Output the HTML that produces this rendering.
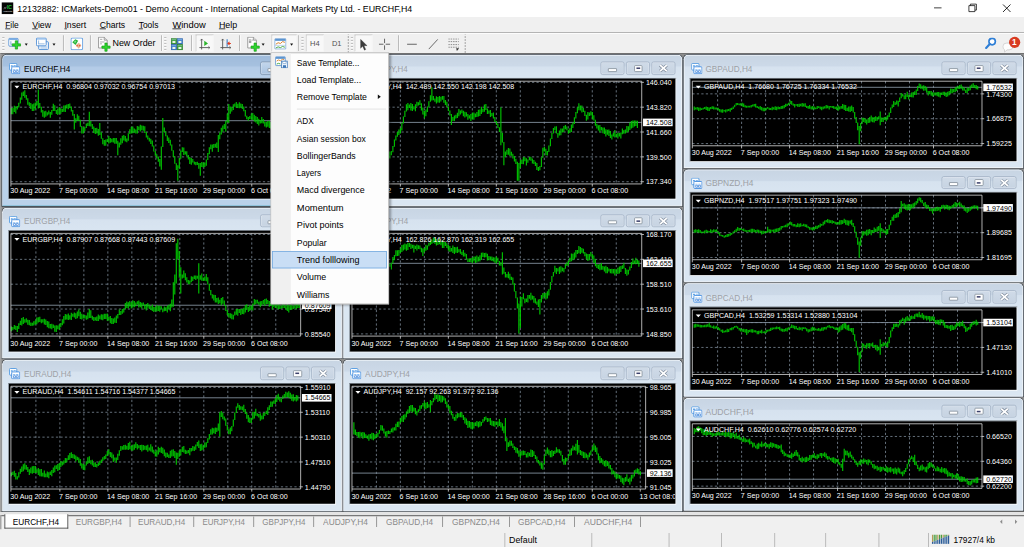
<!DOCTYPE html>
<html lang="en"><head><meta charset="utf-8"><title>12132882: ICMarkets-Demo01 - Demo Account - EURCHF,H4</title>
<style>
*{box-sizing:border-box;margin:0;padding:0}
html,body{width:1024px;height:547px;overflow:hidden;background:#f0f0f0}
#app{position:absolute;left:0;top:0;width:1366px;height:730px;transform:scale(0.749634);transform-origin:0 0;font:12.0px "Liberation Sans", Arial, sans-serif;color:#000;background:#f0f0f0;overflow:hidden}
#app i{display:block;position:absolute;font-style:normal}
.fx{display:inline-block;font-weight:normal;transform-origin:0 50%;white-space:nowrap}
.titlebar{position:absolute;left:0;top:0;width:1366px;height:23px;background:#fff}
.titlebar .logo{position:absolute;left:2px;top:3px}
.titlebar .tt{position:absolute;left:23.300px;top:0;line-height:25px;white-space:nowrap}
.wc{position:absolute;top:0;width:46px;height:23px}
.menubar{position:absolute;left:0;top:23px;width:1366px;height:20px;background:#f0f0f0}
.menubar span{position:absolute;top:1px;line-height:19px;white-space:nowrap}
.menubar u{text-decoration:underline;text-underline-offset:1px}
.toolbar{position:absolute;left:0;top:43px;width:1366px;height:28px;background:#f0f0f0;border-top:1px solid #a0a0a0;box-shadow:inset 0 1px 0 #fff}
.grip{top:5px;width:3px;height:19px;background:repeating-linear-gradient(#c0c0c0 0 1.300px,#fbfbfb 1.300px 2.600px,#f0f0f0 2.600px 4px)}
.tsep{top:3px;width:2px;height:21px;border-left:1px solid #a8a8a8;border-right:1px solid #fff}
.dsep{top:2px;width:1px;height:25px;background:repeating-linear-gradient(#8c8c8c 0 1px,#f0f0f0 1px 2px)}
.dd{top:14px;width:0;height:0;border:2.600px solid transparent;border-top:3.200px solid #111;border-bottom:0}
.prs{top:2px;height:23px;background:#f8f8f8;border:1px solid #f4f4f4;border-top-color:#c2c2c2;border-left-color:#cbcbcb}
.ti{position:absolute}
.tlabel{position:absolute;top:2.500px;line-height:23px;white-space:nowrap}
.tf{position:absolute;top:3px;line-height:23px;font-size:10px;color:#505050}
.badge{position:absolute;width:15px;height:15px;border-radius:8px;background:#d83b21;color:#fff;font:bold 11px "Liberation Sans", Arial, sans-serif;line-height:15px;text-align:center}
.mdi{position:absolute;left:0;top:71px;width:1366px;height:613px;background:#8c8c8c;border:1px solid #606060;border-left:2px solid #a2a2a2;border-bottom:0;border-right:0}
.mdi:after{content:'';position:absolute;left:0;right:0;bottom:0;height:1.600px;background:#5c5c5c}
.mw{position:absolute;background:#dae6f2;border-radius:7px 7px 0 0;border:1px solid #3e444b;border-bottom-color:#2c3035;overflow:hidden}
.mwin{position:absolute;left:0;top:0;right:0;bottom:0;border:1px solid rgba(255,255,255,.8);border-radius:6px 6px 0 0;background:linear-gradient(#c8d5e3 0,#ccd9e8 14px,#d6e2ef 15px,#d9e5f1 30px,#dae6f2 31px)}
.mw.act{border-color:#2e343a;background:#b9d1ea}
.mw.act .mwin{border-bottom:1.500px solid #2aa6b8}
.mw.act .mwin{background:linear-gradient(#9fbbdb 0,#a6c1df 14px,#b3cbe7 15px,#b7cfe9 30px,#bad2ea 31px)}
.cap{position:absolute;left:0;top:0;right:0;height:31px}
.wi{position:absolute;left:8.300px;top:10.200px}
.ttl{position:absolute;left:28px;top:6.5px;line-height:23px;color:#9da1a6;white-space:nowrap}
.act .ttl{color:#000}
.wb{position:absolute;top:8px;width:32px;height:17.600px;border:1px solid #a3b1c4;border-radius:3px;background:linear-gradient(#d0dbe8,#c6d3e2);box-shadow:inset 0 0 0 1px rgba(255,255,255,.35)}
.act .wb{border-color:#7d93ad;background:linear-gradient(#c3d6ec,#a9c3e0)}
.wb svg{position:absolute;left:9px;top:3px}
#app .bmin{left:9px;top:7.500px;width:12px;height:5px;border:1px solid #7c8894;border-radius:1px;background:#fff}
#app .bres{left:9.500px;top:3.500px;width:11.500px;height:9px;border:1px solid #7c8894;border-radius:1.500px;background:#fff;box-shadow:inset 0 0 0 1px #fff}
#app .bres:after{content:'';position:absolute;left:2px;top:2.500px;width:5px;height:2px;background:#3a3f6a}
.edge{position:absolute;border:1px solid #fff;border-top-color:#5e646b;border-left-color:#7a828b}
.chart{position:absolute;left:0;top:0;right:0;bottom:0;background:#000;overflow:hidden}
.cs{position:absolute;left:0;top:0}
.cs .grid{stroke:#8594a3;stroke-width:.75;stroke-dasharray:2.25 2.25;fill:none}
.cs .bid{stroke:#82909d;stroke-width:.9;fill:none}
.cs .bars{stroke:#00cc00;stroke-width:1.1;fill:none}
.cs .frame{stroke:#e8e8e8;stroke-width:.75;fill:none}
.cs .ct{font:7.600px "Liberation Sans", Arial, sans-serif;fill:#fff}
.tabsbar{position:absolute;left:0;top:683.200px;width:1366px;height:24.800px;background:#f0f0f0;border-top:4px solid #e4e4e4}
.tline{left:0;top:0;width:1366px;height:2px;background:linear-gradient(#747474,#7c7c7c 60%,#b0b0b0)}
.atab{left:5.500px;top:-.8px;width:85.500px;height:19px;background:#fff;border:1.600px solid #2a2a2a;border-top:0}
.tgr{left:0;top:0;width:2px;height:19px;background:#a6a6a6}
.tab{position:absolute;top:0;line-height:18px;color:#8a8a8a;white-space:nowrap}
.tab.on{color:#000}
.tbs{top:2px;width:1px;height:14px;background:#7a7a7a}
.tarr{top:6px;width:0;height:0;border:3.200px solid transparent}
.tarr.l{border-right:3.600px solid #8c8c8c;border-left:0}
.tarr.r{border-left:3.600px solid #8c8c8c;border-right:0}
.statusbar{position:absolute;left:0;top:708px;width:1366px;height:22px;background:#f0f0f0}
.ssep{top:3px;width:1px;height:19px;background:#a8a8a8}
.st{position:absolute;top:1.700px;line-height:21px;white-space:nowrap}
.sig{position:absolute}
.pop{position:absolute;left:361px;top:70px;width:158.300px;height:336px;background:#fdfdfd;border:1px solid #a8a8a8;padding:.5px 1px 2px;box-shadow:2px 2px 3px rgba(0,0,0,.35);z-index:50}
.gut{position:absolute;left:0;top:0;width:26px;bottom:0;background:#f0f0f0}
.pi{position:relative;height:23.120px;line-height:22px;padding-left:32px;white-space:nowrap;border:1px solid transparent}
.pi span{position:relative}
.pi.hl{background:#c9def5;border:1px solid #6ea5dd;margin:0 1px 0 0;padding-left:32px}
.psep{position:relative;height:9px}
.psep:after{content:"";position:absolute;left:33px;right:2px;top:4px;height:1px;background:#dcdcdc}
#app .sub{right:8px;top:7px;width:0;height:0;border:3.500px solid transparent;border-left:4px solid #111;border-right:0}
.pic{position:absolute;left:2.500px;top:2.500px}
</style></head><body>
<div id="app">
<div class="titlebar"><svg class="logo" width="16" height="16" viewBox="0 0 16 16"><rect width="16" height="16" fill="#060606"/><path d="M3.200 9.300l1.200-2.600 1 1.600 1-2.300" stroke="#9a9a9a" stroke-width=".8" fill="none"/><text x="7.200" y="9.600" font-size="6.800" font-weight="bold" fill="#1fc535" font-family="Liberation Sans, Arial, sans-serif">IC</text><text x="2.600" y="13.200" font-size="3.300" fill="#f0f0f0" font-family="Liberation Sans, Arial, sans-serif">Markets</text></svg><span class="tt"><b class="fx" style="transform:scaleX(0.979)">12132882: ICMarkets-Demo01 - Demo Account - International Capital Markets Pty Ltd. - EURCHF,H4</b></span>
<svg class="wc" style="left:1228px" viewBox="0 0 46 23"><path d="M18 10.500h10" stroke="#000" stroke-width="1"/></svg>
<svg class="wc" style="left:1274px" viewBox="0 0 46 23"><path d="M18.500 7.500h8v8h-8zM20.500 7.500v-2h8v8h-2" stroke="#000" stroke-width="1" fill="none"/></svg>
<svg class="wc" style="left:1320px" viewBox="0 0 46 23"><path d="M18 6l10 10M28 6l-10 10" stroke="#000" stroke-width="1.100"/></svg>
</div>
<div class="menubar"><span style="left:7.3px"><b class="fx" style="transform:scaleX(0.931)"><u>F</u>ile</b></span><span style="left:43.4px"><b class="fx" style="transform:scaleX(0.970)"><u>V</u>iew</b></span><span style="left:86px"><b class="fx" style="transform:scaleX(0.960)"><u>I</u>nsert</b></span><span style="left:133.4px"><b class="fx" style="transform:scaleX(0.962)"><u>C</u>harts</b></span><span style="left:185.4px"><b class="fx" style="transform:scaleX(0.940)"><u>T</u>ools</b></span><span style="left:230px"><b class="fx" style="transform:scaleX(1.039)"><u>W</u>indow</b></span><span style="left:292px"><b class="fx" style="transform:scaleX(0.986)"><u>H</u>elp</b></span></div>
<div class="toolbar">
<i class="grip" style="left:3px"></i>
<svg class="ti" style="left:11px;top:6px" width="19" height="19" viewBox="0 0 19 19"><rect x=".6" y="1.100" width="12.500" height="10.500" rx="1.300" fill="#fff" stroke="#4a8ad4" stroke-width="1.200"/><rect x="1.200" y="1.700" width="11.300" height="1.800" fill="#7db0e6"/><path d="M3.500 5v4.500M3.500 9h2" stroke="#5a8fd0" fill="none" stroke-width="1"/><path d="M5.4 8.5h4v-4h3v4h4v3h-4v4h-3v-4h-4z" fill="#2fd52f" stroke="#0c980c" stroke-width=".8"/></svg>
<i class="dd" style="left:32.8px"></i>
<svg class="ti" style="left:48px;top:6px" width="18" height="17" viewBox="0 0 18 17"><rect x="3.600" y="5.600" width="13" height="10.500" rx="1.300" fill="#f2f7fd" stroke="#4a8ad4" stroke-width="1.200"/><path d="M6 12.500h9M6 14.200h9" stroke="#9dbfe6" stroke-width="1"/><rect x=".6" y=".6" width="13" height="10.500" rx="1.300" fill="#fff" stroke="#4a8ad4" stroke-width="1.200"/><rect x="1.200" y="1.200" width="11.800" height="1.600" fill="#8ab8ea"/><path d="M3.500 4v5M3 8.500h8.500" stroke="#7aa7d8" fill="none" stroke-width="1"/></svg>
<i class="dd" style="left:70.10000000000001px"></i>
<i class="tsep" style="left:84px"></i>
<svg class="ti" style="left:94px;top:6px" width="17" height="17" viewBox="0 0 17 17"><rect x=".7" y=".7" width="15.600" height="15.600" rx="2" fill="#fff" stroke="#6aa3e2" stroke-width="1.400"/><path d="M2.500 6.500l4-4 3.800 2-3.500 5.500z" fill="#27b33a"/><path d="M4.500 6l2-2 1.500 1-1.800 2.500z" fill="#7fe08a"/><path d="M7 10.500l4-3.500 3.500 3.500-3.500 4.500z" fill="#e8b58f"/><path d="M8.300 9.800l1.700 1.300-1.700 1.200zM13 9.800l-1.700 1.300 1.700 1.200z" fill="#e8301a"/></svg>
<i class="tsep" style="left:120px"></i>
<svg class="ti" style="left:130px;top:5px" width="20" height="21" viewBox="0 0 20 21"><path d="M1.500 .6h7.500l4 4v10.400h-11.500z" fill="#fff" stroke="#8a8a8a" stroke-width="1.100"/><path d="M9 .6v4h4" fill="#e0e0e0" stroke="#8a8a8a" stroke-width="1"/><path d="M3.500 3.500h3M3.500 7h6M3.500 9.500h2.500" stroke="#9a9a9a" stroke-width="1.100"/><path d="M5.9 12.4h4v-4h3v4h4v3h-4v4h-3v-4h-4z" fill="#2fd52f" stroke="#0c980c" stroke-width=".8"/></svg>
<span class="tlabel" style="left:150px"><b class="fx" style="transform:scaleX(0.991)">New Order</b></span>
<i class="tsep" style="left:214.5px"></i>
<i class="grip" style="left:219px"></i>
<svg class="ti" style="left:228px;top:7px" width="16" height="16" viewBox="0 0 16 16"><rect x=".5" y=".5" width="7" height="7" fill="#3aa23a" stroke="#2a7d2a"/><rect x="8.5" y=".5" width="7" height="7" fill="#3c7fcf" stroke="#2c62a8"/><rect x=".5" y="8.500" width="7" height="7" fill="#3c7fcf" stroke="#2c62a8"/><rect x="8.500" y="8.500" width="7" height="7" fill="#3aa23a" stroke="#2a7d2a"/><path d="M2 5h4M10 5h4M2 13h4M10 13h4" stroke="#e8f4e8" stroke-width="2.4"/><path d="M1 2h6M9 2h6M1 10h6M9 10h6" stroke="#cfe8ff" stroke-width="1" opacity=".6"/></svg>
<i class="tsep" style="left:254.5px"></i>
<i class="prs" style="left:261px;width:24px"></i>
<svg class="ti" style="left:265px;top:7px" width="16" height="16" viewBox="0 0 16 16"><path d="M4 1v14M1 12.500h14" stroke="#555" stroke-width="1.2" fill="none"/><path d="M2.300 3l1.700-2 1.700 2M13 10.800l2 1.700-2 1.700" stroke="#555" fill="none" stroke-width=".9"/><path d="M7.500 3.500v7l5-3.500z" fill="#2db52d"/></svg>
<svg class="ti" style="left:293px;top:7px" width="16" height="16" viewBox="0 0 16 16"><path d="M4 1v14M1 12.500h14" stroke="#555" stroke-width="1.200" fill="none"/><path d="M2.300 3l1.700-2 1.700 2M13 10.800l2 1.700-2 1.700" stroke="#555" fill="none" stroke-width=".9"/><path d="M10 1.500v10" stroke="#4a86c8" stroke-width="1.600"/><path d="M15 7h-3.500M13.200 5l-2.200 2 2.200 2" stroke="#e03a1e" stroke-width="1.400" fill="none"/></svg>
<i class="tsep" style="left:319px"></i>
<svg class="ti" style="left:329px;top:5px" width="20" height="21" viewBox="0 0 20 21"><path d="M1.500 .6h7.500l4 4v10.400h-11.500z" fill="#fff" stroke="#8a8a8a" stroke-width="1.100"/><path d="M9 .6v4h4" fill="#e0e0e0" stroke="#8a8a8a" stroke-width="1"/><path d="M4.500 3v5.500M3 7h3.500M6.500 4.500h1.500" stroke="#666" stroke-width="1"/><path d="M5.9 12.4h4v-4h3v4h4v3h-4v4h-3v-4h-4z" fill="#2fd52f" stroke="#0c980c" stroke-width=".8"/></svg>
<i class="dd" style="left:349.2px"></i>
<i class="prs" style="left:362px;width:34px"></i>
<svg class="ti" style="left:366px;top:7px" width="16" height="15" viewBox="0 0 16 15"><rect x=".5" y=".5" width="15" height="14" rx="1" fill="#fff" stroke="#4a86c8"/><rect x="1" y="1" width="14" height="2.500" fill="#5b94d0"/><path d="M2 8l3-2 3 1 3-2.500 3 1" stroke="#d9822b" stroke-width="1.300" fill="none"/><path d="M1 9.500h14" stroke="#9ab9dc" stroke-width=".8"/><path d="M2 13l3-1.500 3 1 3-1.500 3 1" stroke="#3aa23a" stroke-width="1.200" fill="none"/></svg>
<i class="dd" style="left:386.79999999999995px"></i>
<i class="tsep" style="left:398px"></i>
<i class="grip" style="left:402px"></i>
<i class="prs" style="left:408px;width:24px"></i>
<span class="tf" style="left:413.5px">H4</span><span class="tf" style="left:442.8px">D1</span>
<i class="dsep" style="left:463.5px"></i>
<i class="grip" style="left:467.5px"></i>
<i class="prs" style="left:473px;width:24px"></i>
<svg class="ti" style="left:480px;top:8px" width="11" height="16" viewBox="0 0 11 16"><path d="M1 .5v12l2.800-2.800 2.300 5.200 1.800-.9-2.300-5.100h4.100z" fill="#3c3c3c" stroke="#333" stroke-width=".4"/></svg>
<svg class="ti" style="left:505px;top:7px" width="16" height="16" viewBox="0 0 16 16"><path d="M8 .5v6M8 9.500v6M.5 8h6M9.500 8h6" stroke="#555" stroke-width="1.200"/></svg>
<i class="tsep" style="left:531px"></i>
<svg class="ti" style="left:543px;top:7px" width="14" height="16" viewBox="0 0 14 16"><path d="M0 8h13" stroke="#666" stroke-width="1.600"/></svg>
<svg class="ti" style="left:571px;top:7px" width="14" height="16" viewBox="0 0 14 16"><path d="M1 14.500L13 1.500" stroke="#666" stroke-width="1.300"/></svg>
<svg class="ti" style="left:598px;top:7px" width="15" height="18" viewBox="0 0 15 18"><path d="M0 1h14M0 4.500h14M0 8.500h14M0 12h14" stroke="#808080" stroke-width="1.200" stroke-dasharray="2 1.200"/><path d="M10.500 13.500h4l-3 3.500z" fill="#333"/></svg>
<i class="dsep" style="left:620px"></i>
<svg class="ti" style="left:1314px;top:6px" width="16" height="16" viewBox="0 0 16 16"><circle cx="9.500" cy="5.500" r="4.300" fill="#fff" stroke="#2f7fd6" stroke-width="2.200"/><path d="M6.300 8.800L1.500 14" stroke="#2f7fd6" stroke-width="2.800" stroke-linecap="round"/></svg>
<svg class="ti" style="left:1337px;top:12px" width="16" height="16" viewBox="0 0 16 16"><path d="M1 5.500a5 4 0 0 1 5-4h3a5 4 0 0 1 5 4v1a5 4 0 0 1-5 4h-2.500l-3.500 3v-3.300a5 4 0 0 1-2-3.700z" fill="#fdfdfd" stroke="#c9c9c9"/></svg>
<span class="badge" style="left:1345.5px;top:5px">1</span>
</div>
<div class="mdi">
</div>
<div class="mw act" style="left:2px;top:72px;width:454.7px;height:203.5px">
<div class="mwin"><div class="cap"><svg class="wi" width="15" height="15" viewBox="0 0 15 15"><rect x=".6" y=".6" width="9.800" height="8.800" rx="1.200" fill="#fff" stroke="#4f97e0" stroke-width="1.200"/><path d="M2.500 3h2.500v2h-2.500zM6 3h3v1h-3z" fill="#5ea2e6"/><rect x="3.600" y="5.100" width="10.800" height="9.300" rx="1.200" fill="#fff" stroke="#3f8be0" stroke-width="1.200"/><path d="M5.500 8h3v1.200h-3zM9.500 8h3v1.200h-3z" fill="#8bbcf0"/><path d="M6 10.200h2.600v2.600h-2.600zM9.800 10.200h2.600v2.600h-2.600z" fill="none" stroke="#2f7ad6" stroke-width=".9"/></svg><span class="ttl"><b class="fx" style="transform:scaleX(0.917)">EURCHF,H4</b></span>
<span class="wb" style="right:76px"><i class="bmin"></i></span><span class="wb" style="right:42px"><i class="bres"></i></span><span class="wb" style="right:8px"><svg width="12" height="10" viewBox="0 0 12 10"><path d="M1.5 1l9 8M10.5 1l-9 8" stroke="#8490a0" stroke-width="4.2"/><path d="M1.5 1l9 8M10.5 1l-9 8" stroke="#fff" stroke-width="2.3"/></svg></span></div>
<div class="edge" style="left:7px;top:29.6px;width:436.7px;height:162.9px"><div class="chart">
<svg class="cs" width="434.7" height="160.9" viewBox="8.996 78.412 325.866 120.616">
<path d="M35.90 80.91V183.63M59.88 80.91V183.63M83.87 80.91V183.63M107.86 80.91V183.63M131.85 80.91V183.63M155.84 80.91V183.63M179.83 80.91V183.63M203.81 80.91V183.63M227.80 80.91V183.63M251.79 80.91V183.63M275.78 80.91V183.63M10.90 82.03H300.66M10.90 106.88H300.66M10.90 131.73H300.66M10.90 156.58H300.66M10.90 181.43H300.66" class="grid"/>
<path d="M10.90 120.40H300.66" class="bid"/>
<path d="M11.30 107.8V114.0M12.80 107.6V114.0M14.30 105.5V111.7M15.80 106.2V113.3M17.30 105.7V109.3M18.80 102.5V107.2M20.30 97.1V103.3M21.80 92.2V99.5M23.30 91.3V95.7M24.80 89.9V97.5M26.30 94.8V99.5M27.80 97.9V104.5M29.30 102.0V105.9M30.80 102.8V108.6M32.30 103.9V110.7M33.80 103.1V110.7M35.30 102.2V109.2M36.80 100.7V104.9M38.30 89.1V108.1M39.80 102.6V107.5M41.30 106.5V112.3M42.80 109.7V116.4M44.30 110.9V117.4M45.80 110.4V116.5M47.30 112.0V115.3M48.80 110.3V114.3M50.30 111.8V117.5M51.80 109.7V114.4M53.30 103.5V110.8M54.80 105.0V110.8M56.30 109.6V113.6M57.80 108.2V114.8M59.30 106.8V113.7M60.80 107.9V113.4M62.30 108.5V111.7M63.80 105.3V111.4M65.30 105.0V111.7M66.80 104.2V108.3M68.30 103.6V108.9M69.80 103.3V107.8M71.30 106.3V111.2M72.80 109.6V115.5M74.30 113.7V129.3M75.80 118.0V122.5M77.30 113.9V120.4M78.80 115.5V120.8M80.30 119.4V126.5M81.80 125.8V133.1M83.30 127.0V133.3M84.80 127.0V130.9M86.30 123.3V127.6M87.80 122.5V125.8M89.30 111.4V125.9M90.80 120.7V126.3M92.30 123.6V128.7M93.80 126.3V132.8M95.30 127.8V133.6M96.80 127.5V133.3M98.30 128.6V135.4M99.80 122.6V134.8M101.30 131.9V138.5M102.80 137.9V143.9M104.30 139.6V145.5M105.80 139.1V145.4M107.30 138.5V141.7M108.80 135.7V143.1M110.30 137.8V142.4M111.80 138.5V141.9M113.30 137.7V142.2M114.80 137.6V143.5M116.30 137.7V143.4M117.80 140.4V154.9M119.30 142.3V147.1M120.80 138.0V144.4M122.30 135.5V143.0M123.80 134.6V140.3M125.30 135.6V141.3M126.80 138.2V141.9M128.30 133.0V140.5M129.80 128.9V133.7M131.30 126.5V133.1M132.80 126.3V133.0M134.30 128.2V132.5M135.80 129.3V133.1M137.30 125.7V133.1M138.80 126.3V130.0M140.30 124.5V131.1M141.80 125.1V130.0M143.30 125.4V130.5M144.80 125.9V132.7M146.30 131.7V137.1M147.80 135.2V139.2M149.30 137.5V141.1M150.80 138.5V143.6M152.30 140.3V146.1M153.80 145.2V151.3M155.30 150.7V155.5M156.80 154.0V158.2M158.30 156.2V161.4M159.80 158.8V166.2M161.30 146.1V169.4M162.80 117.7V146.7M164.30 127.2V131.8M165.80 130.9V136.0M167.30 135.3V140.8M168.80 137.2V142.7M170.30 139.4V145.2M171.80 144.1V150.5M173.30 149.9V156.7M174.80 155.9V163.5M176.30 162.9V169.8M177.80 164.9V180.5M179.30 157.8V168.0M180.80 150.3V158.4M182.30 147.0V151.7M183.80 147.2V154.8M185.30 151.0V154.3M186.80 151.0V155.9M188.30 154.6V159.3M189.80 156.8V163.8M191.30 157.6V164.4M192.80 158.7V162.2M194.30 161.1V164.3M195.80 161.7V164.9M197.30 161.5V164.8M198.80 162.6V168.5M200.30 162.7V175.4M201.80 161.8V166.6M203.30 162.3V167.2M204.80 162.2V166.7M206.30 159.1V165.5M207.80 152.8V159.7M209.30 146.9V154.0M210.80 144.2V149.0M212.30 144.2V151.5M213.80 143.7V147.7M215.30 143.5V147.3M216.80 142.1V147.6M218.30 134.8V151.6M219.80 132.1V138.9M221.30 127.5V134.1M222.80 125.1V131.5M224.30 123.7V128.6M225.80 120.4V131.5M227.30 113.1V121.9M228.80 103.6V122.6M230.30 106.1V113.4M231.80 107.0V111.2M233.30 104.0V109.8M234.80 103.3V106.5M236.30 101.6V107.4M237.80 103.5V107.7M239.30 102.0V108.0M240.80 103.1V107.4M242.30 103.6V108.8M243.80 106.2V110.9M245.30 109.8V116.1M246.80 115.4V118.9M248.30 116.7V120.4M249.80 115.7V118.7M251.30 113.3V119.4M252.80 112.8V119.6M254.30 114.5V121.3M255.80 115.8V122.1M257.30 116.7V123.6M258.80 118.4V125.3M260.30 119.6V123.2M261.80 116.6V123.0M263.30 118.8V123.1M264.80 121.2V126.1M266.30 121.5V127.1M267.80 120.7V126.4M269.30 120.4V127.8M270.80 121.7V128.1M272.30 123.2V128.7M273.80 122.3V127.6M275.30 120.0V125.9M276.80 120.8V127.4M278.30 121.8V125.7M279.80 119.5V126.7M281.30 121.6V125.8M282.80 119.3V124.0M284.30 119.4V124.6M285.80 118.7V123.9M287.30 120.4V123.5M288.80 121.0V124.0M290.30 119.7V124.1M291.80 117.6V124.7M293.30 118.2V123.3M294.80 118.5V122.3M296.30 119.6V122.8M297.80 118.4V124.0M299.30 118.4V124.1" class="bars"/>
<path d="M10.90 80.91H300.66V183.63H10.90Z" class="frame"/>
<path d="M300.66 82.03h2.2M300.66 106.88h2.2M300.66 131.73h2.2M300.66 156.58h2.2M300.66 181.43h2.2M10.90 183.63v2.6M59.88 183.63v2.6M107.86 183.63v2.6M155.84 183.63v2.6M203.81 183.63v2.6M251.79 183.63v2.6" class="frame"/>
<path d="M14.30 85.51h5.2l-2.6 2.8z" fill="#fff"/>
<text x="22.50" y="89.11" class="ct" textLength="152.37" lengthAdjust="spacingAndGlyphs" xml:space="preserve">EURCHF,H4  0.96804 0.97032 0.96754 0.97013</text>
<text x="10.30" y="193.13" class="ct" textLength="39.88" lengthAdjust="spacingAndGlyphs" xml:space="preserve">30 Aug 2022</text>
<text x="59.08" y="193.13" class="ct" textLength="38.30" lengthAdjust="spacingAndGlyphs" xml:space="preserve">7 Sep 00:00</text>
<text x="107.06" y="193.13" class="ct" textLength="42.24" lengthAdjust="spacingAndGlyphs" xml:space="preserve">14 Sep 08:00</text>
<text x="155.04" y="193.13" class="ct" textLength="42.24" lengthAdjust="spacingAndGlyphs" xml:space="preserve">21 Sep 16:00</text>
<text x="203.01" y="193.13" class="ct" textLength="42.24" lengthAdjust="spacingAndGlyphs" xml:space="preserve">29 Sep 00:00</text>
<text x="250.99" y="193.13" class="ct" textLength="36.71" lengthAdjust="spacingAndGlyphs" xml:space="preserve">6 Oct 08:00</text>
<text x="304.86" y="84.73" class="ct" textLength="25.67" lengthAdjust="spacingAndGlyphs" xml:space="preserve">0.98960</text>
<text x="304.86" y="109.58" class="ct" textLength="25.67" lengthAdjust="spacingAndGlyphs" xml:space="preserve">0.97980</text>
<text x="304.86" y="134.43" class="ct" textLength="25.67" lengthAdjust="spacingAndGlyphs" xml:space="preserve">0.96960</text>
<text x="304.86" y="159.28" class="ct" textLength="25.67" lengthAdjust="spacingAndGlyphs" xml:space="preserve">0.95960</text>
<text x="304.86" y="184.13" class="ct" textLength="25.67" lengthAdjust="spacingAndGlyphs" xml:space="preserve">0.94980</text>
<rect x="301.96" y="116.60" width="29.60" height="7.6" fill="#fff"/>
<text x="304.86" y="123.10" class="ct" textLength="25.67" lengthAdjust="spacingAndGlyphs" xml:space="preserve" style="fill:#000">0.97013</text>
</svg>
</div></div></div></div><div class="mw" style="left:2px;top:275.5px;width:454.7px;height:203.5px">
<div class="mwin"><div class="cap"><svg class="wi" width="15" height="15" viewBox="0 0 15 15"><rect x=".6" y=".6" width="9.800" height="8.800" rx="1.200" fill="#fff" stroke="#4f97e0" stroke-width="1.200"/><path d="M2.500 3h2.500v2h-2.500zM6 3h3v1h-3z" fill="#5ea2e6"/><rect x="3.600" y="5.100" width="10.800" height="9.300" rx="1.200" fill="#fff" stroke="#3f8be0" stroke-width="1.200"/><path d="M5.500 8h3v1.200h-3zM9.500 8h3v1.200h-3z" fill="#8bbcf0"/><path d="M6 10.200h2.600v2.600h-2.600zM9.800 10.200h2.600v2.600h-2.600z" fill="none" stroke="#2f7ad6" stroke-width=".9"/></svg><span class="ttl"><b class="fx" style="transform:scaleX(0.910)">EURGBP,H4</b></span>
<span class="wb" style="right:76px"><i class="bmin"></i></span><span class="wb" style="right:42px"><i class="bres"></i></span><span class="wb" style="right:8px"><svg width="12" height="10" viewBox="0 0 12 10"><path d="M1.5 1l9 8M10.5 1l-9 8" stroke="#8490a0" stroke-width="4.2"/><path d="M1.5 1l9 8M10.5 1l-9 8" stroke="#fff" stroke-width="2.3"/></svg></span></div>
<div class="edge" style="left:7px;top:29.6px;width:436.7px;height:162.9px"><div class="chart">
<svg class="cs" width="434.7" height="160.9" viewBox="8.996 230.962 325.866 120.616">
<path d="M35.90 233.46V336.18M59.88 233.46V336.18M83.87 233.46V336.18M107.86 233.46V336.18M131.85 233.46V336.18M155.84 233.46V336.18M179.83 233.46V336.18M203.81 233.46V336.18M227.80 233.46V336.18M251.79 233.46V336.18M275.78 233.46V336.18M10.90 234.58H300.66M10.90 259.43H300.66M10.90 284.28H300.66M10.90 309.13H300.66M10.90 333.98H300.66" class="grid"/>
<path d="M10.90 305.30H300.66" class="bid"/>
<path d="M11.30 326.6V331.3M12.80 327.2V330.4M14.30 325.1V329.4M15.80 325.9V330.1M17.30 326.2V332.1M18.80 323.3V329.2M20.30 320.8V325.0M21.80 318.0V325.5M23.30 317.0V324.0M24.80 319.3V322.8M26.30 318.3V322.6M27.80 319.9V324.9M29.30 320.1V325.3M30.80 322.6V326.0M32.30 322.8V325.9M33.80 321.3V325.7M35.30 320.5V324.7M36.80 317.7V324.4M38.30 317.4V322.5M39.80 316.8V322.2M41.30 319.4V323.3M42.80 319.4V322.5M44.30 318.8V324.7M45.80 319.7V325.2M47.30 321.0V327.4M48.80 321.6V328.4M50.30 324.1V328.7M51.80 323.9V329.3M53.30 324.6V328.1M54.80 325.6V331.8M56.30 325.3V332.2M57.80 325.6V329.4M59.30 324.3V329.9M60.80 323.2V327.3M62.30 319.4V325.4M63.80 316.2V323.5M65.30 314.0V319.8M66.80 314.7V319.5M68.30 313.5V320.0M69.80 315.4V319.5M71.30 312.8V320.0M72.80 313.8V316.9M74.30 312.5V317.7M75.80 313.3V319.1M77.30 311.6V318.3M78.80 309.6V316.3M80.30 311.9V319.0M81.80 313.8V319.6M83.30 314.8V318.5M84.80 315.2V318.7M86.30 315.6V319.9M87.80 312.5V319.4M89.30 309.1V318.1M90.80 310.4V318.0M92.30 315.8V319.9M93.80 317.2V321.2M95.30 317.3V320.5M96.80 316.5V321.1M98.30 314.6V321.2M99.80 315.6V319.4M101.30 314.4V319.9M102.80 314.5V320.3M104.30 313.8V319.2M105.80 313.8V319.1M107.30 313.7V320.8M108.80 316.8V320.5M110.30 316.0V323.4M111.80 318.1V324.2M113.30 318.7V324.1M114.80 317.7V322.9M116.30 315.6V323.2M117.80 314.0V318.7M119.30 309.6V315.1M120.80 311.2V315.2M122.30 309.2V313.9M123.80 308.5V312.6M125.30 303.2V309.4M126.80 301.6V308.1M128.30 302.4V308.7M129.80 301.0V306.7M131.30 302.3V308.5M132.80 300.3V307.7M134.30 301.0V307.4M135.80 302.6V306.3M137.30 301.4V304.5M138.80 300.6V307.7M140.30 302.0V307.3M141.80 302.8V308.5M143.30 302.6V305.9M144.80 304.6V309.3M146.30 304.1V310.7M147.80 303.2V307.9M149.30 304.9V309.1M150.80 306.1V310.1M152.30 304.6V311.2M153.80 306.9V312.2M155.30 307.0V311.5M156.80 305.0V311.7M158.30 306.1V311.2M159.80 305.6V311.8M161.30 306.3V309.3M162.80 308.6V312.3M164.30 306.5V311.3M165.80 307.3V311.0M167.30 305.9V312.6M168.80 304.8V309.4M170.30 303.9V311.3M171.80 299.5V307.6M173.30 282.4V306.9M174.80 274.6V294.6M176.30 243.4V283.5M177.80 238.9V259.0M179.30 251.2V277.9M180.80 267.3V293.5M182.30 274.6V278.5M183.80 270.7V277.8M185.30 273.4V280.4M186.80 277.3V282.6M188.30 280.1V284.0M189.80 280.7V284.6M191.30 276.4V282.4M192.80 276.9V281.1M194.30 275.5V279.2M195.80 275.6V280.1M197.30 275.9V278.9M198.80 263.4V293.5M200.30 275.3V279.9M201.80 273.6V280.9M203.30 277.6V281.0M204.80 276.6V280.9M206.30 274.1V281.3M207.80 277.3V284.7M209.30 284.1V290.8M210.80 290.1V295.4M212.30 294.3V298.6M213.80 294.9V300.7M215.30 295.0V302.5M216.80 298.2V302.6M218.30 297.6V304.2M219.80 299.8V303.3M221.30 298.1V305.3M222.80 297.0V303.9M224.30 300.6V306.2M225.80 305.4V311.0M227.30 310.0V315.3M228.80 313.0V317.5M230.30 313.3V318.3M231.80 313.9V319.4M233.30 314.9V319.6M234.80 311.6V315.7M236.30 309.1V314.9M237.80 309.2V315.9M239.30 309.2V313.2M240.80 309.2V315.2M242.30 308.8V314.0M243.80 307.9V314.3M245.30 305.1V312.5M246.80 304.4V309.8M248.30 306.8V312.1M249.80 305.1V311.2M251.30 305.9V309.9M252.80 303.7V310.7M254.30 299.2V305.0M255.80 299.9V304.3M257.30 299.8V303.6M258.80 301.8V304.9M260.30 301.4V307.4M261.80 301.1V305.6M263.30 300.2V304.4M264.80 299.0V306.2M266.30 298.5V304.3M267.80 300.1V304.2M269.30 301.2V306.8M270.80 302.9V306.1M272.30 302.6V309.7M273.80 303.9V307.4M275.30 303.1V308.2M276.80 303.1V308.4M278.30 303.2V309.5M279.80 304.7V309.1M281.30 305.5V308.8M282.80 302.2V308.0M284.30 304.3V308.0M285.80 305.3V309.6M287.30 303.9V311.2M288.80 305.0V312.5M290.30 304.8V310.2M291.80 304.6V309.9M293.30 305.6V309.1M294.80 304.3V308.3M296.30 303.7V309.3M297.80 302.3V308.2M299.30 303.9V308.0" class="bars"/>
<path d="M10.90 233.46H300.66V336.18H10.90Z" class="frame"/>
<path d="M300.66 234.58h2.2M300.66 259.43h2.2M300.66 284.28h2.2M300.66 309.13h2.2M300.66 333.98h2.2M10.90 336.18v2.6M59.88 336.18v2.6M107.86 336.18v2.6M155.84 336.18v2.6M203.81 336.18v2.6M251.79 336.18v2.6" class="frame"/>
<path d="M14.30 238.06h5.2l-2.6 2.8z" fill="#fff"/>
<text x="22.50" y="241.66" class="ct" textLength="152.64" lengthAdjust="spacingAndGlyphs" xml:space="preserve">EURGBP,H4  0.87907 0.87668 0.87443 0.87609</text>
<text x="10.30" y="345.68" class="ct" textLength="39.88" lengthAdjust="spacingAndGlyphs" xml:space="preserve">30 Aug 2022</text>
<text x="59.08" y="345.68" class="ct" textLength="38.30" lengthAdjust="spacingAndGlyphs" xml:space="preserve">7 Sep 00:00</text>
<text x="107.06" y="345.68" class="ct" textLength="42.24" lengthAdjust="spacingAndGlyphs" xml:space="preserve">14 Sep 08:00</text>
<text x="155.04" y="345.68" class="ct" textLength="42.24" lengthAdjust="spacingAndGlyphs" xml:space="preserve">21 Sep 16:00</text>
<text x="203.01" y="345.68" class="ct" textLength="42.24" lengthAdjust="spacingAndGlyphs" xml:space="preserve">29 Sep 00:00</text>
<text x="250.99" y="345.68" class="ct" textLength="36.71" lengthAdjust="spacingAndGlyphs" xml:space="preserve">6 Oct 08:00</text>
<text x="304.86" y="237.28" class="ct" textLength="25.67" lengthAdjust="spacingAndGlyphs" xml:space="preserve">0.93480</text>
<text x="304.86" y="262.13" class="ct" textLength="25.67" lengthAdjust="spacingAndGlyphs" xml:space="preserve">0.91540</text>
<text x="304.86" y="286.98" class="ct" textLength="25.67" lengthAdjust="spacingAndGlyphs" xml:space="preserve">0.89540</text>
<text x="304.86" y="311.83" class="ct" textLength="25.67" lengthAdjust="spacingAndGlyphs" xml:space="preserve">0.87540</text>
<text x="304.86" y="336.68" class="ct" textLength="25.67" lengthAdjust="spacingAndGlyphs" xml:space="preserve">0.85540</text>
<rect x="301.96" y="301.50" width="29.60" height="7.6" fill="#fff"/>
<text x="304.86" y="308.00" class="ct" textLength="25.67" lengthAdjust="spacingAndGlyphs" xml:space="preserve" style="fill:#000">0.87609</text>
</svg>
</div></div></div></div><div class="mw" style="left:2px;top:479px;width:454.7px;height:203.5px">
<div class="mwin"><div class="cap"><svg class="wi" width="15" height="15" viewBox="0 0 15 15"><rect x=".6" y=".6" width="9.800" height="8.800" rx="1.200" fill="#fff" stroke="#4f97e0" stroke-width="1.200"/><path d="M2.500 3h2.500v2h-2.500zM6 3h3v1h-3z" fill="#5ea2e6"/><rect x="3.600" y="5.100" width="10.800" height="9.300" rx="1.200" fill="#fff" stroke="#3f8be0" stroke-width="1.200"/><path d="M5.500 8h3v1.200h-3zM9.500 8h3v1.200h-3z" fill="#8bbcf0"/><path d="M6 10.200h2.600v2.600h-2.600zM9.800 10.200h2.600v2.600h-2.600z" fill="none" stroke="#2f7ad6" stroke-width=".9"/></svg><span class="ttl"><b class="fx" style="transform:scaleX(0.909)">EURAUD,H4</b></span>
<span class="wb" style="right:76px"><i class="bmin"></i></span><span class="wb" style="right:42px"><i class="bres"></i></span><span class="wb" style="right:8px"><svg width="12" height="10" viewBox="0 0 12 10"><path d="M1.5 1l9 8M10.5 1l-9 8" stroke="#8490a0" stroke-width="4.2"/><path d="M1.5 1l9 8M10.5 1l-9 8" stroke="#fff" stroke-width="2.3"/></svg></span></div>
<div class="edge" style="left:7px;top:29.6px;width:436.7px;height:162.9px"><div class="chart">
<svg class="cs" width="434.7" height="160.9" viewBox="8.996 383.513 325.866 120.616">
<path d="M35.90 386.01V488.73M59.88 386.01V488.73M83.87 386.01V488.73M107.86 386.01V488.73M131.85 386.01V488.73M155.84 386.01V488.73M179.83 386.01V488.73M203.81 386.01V488.73M227.80 386.01V488.73M251.79 386.01V488.73M275.78 386.01V488.73M10.90 387.13H300.66M10.90 411.98H300.66M10.90 436.83H300.66M10.90 461.68H300.66M10.90 486.53H300.66" class="grid"/>
<path d="M10.90 397.50H300.66" class="bid"/>
<path d="M11.30 472.3V476.0M12.80 471.5V474.7M14.30 470.4V476.5M15.80 472.7V479.2M17.30 475.9V479.3M18.80 471.9V477.1M20.30 468.4V473.5M21.80 466.1V471.7M23.30 463.9V471.0M24.80 463.0V469.2M26.30 464.8V469.5M27.80 466.7V471.7M29.30 469.0V474.7M30.80 467.1V472.9M32.30 466.0V473.5M33.80 465.6V472.8M35.30 465.8V472.8M36.80 469.0V472.4M38.30 467.8V474.8M39.80 468.9V476.0M41.30 468.7V476.1M42.80 472.5V476.2M44.30 470.2V477.0M45.80 473.1V477.0M47.30 471.1V476.9M48.80 471.9V478.0M50.30 471.3V474.7M51.80 469.7V476.0M53.30 467.1V472.8M54.80 465.1V471.9M56.30 465.0V468.7M57.80 463.7V470.6M59.30 462.7V469.7M60.80 460.6V466.6M62.30 461.5V465.2M63.80 460.3V464.2M65.30 457.8V462.8M66.80 458.0V461.9M68.30 455.0V459.8M69.80 452.7V459.4M71.30 452.0V457.6M72.80 453.8V457.9M74.30 454.3V458.8M75.80 455.3V461.1M77.30 456.5V459.7M78.80 457.1V462.5M80.30 458.6V465.4M81.80 462.9V468.1M83.30 463.8V469.8M84.80 464.5V469.9M86.30 460.9V465.2M87.80 456.9V463.8M89.30 455.9V462.6M90.80 459.9V464.0M92.30 459.4V465.1M93.80 462.5V466.7M95.30 461.9V466.8M96.80 463.6V467.1M98.30 462.1V465.7M99.80 460.4V464.8M101.30 459.1V462.7M102.80 457.0V460.8M104.30 455.7V459.2M105.80 454.3V458.7M107.30 450.6V455.6M108.80 449.0V454.3M110.30 451.7V456.7M111.80 452.1V458.0M113.30 454.1V461.6M114.80 457.1V460.4M116.30 457.3V462.4M117.80 453.5V459.7M119.30 450.0V455.4M120.80 445.6V450.6M122.30 445.9V449.5M123.80 444.7V449.5M125.30 444.5V449.5M126.80 445.4V449.2M128.30 442.7V449.7M129.80 441.5V448.9M131.30 445.6V450.3M132.80 444.4V450.5M134.30 444.0V449.4M135.80 441.9V447.7M137.30 443.8V449.1M138.80 444.9V448.0M140.30 444.8V449.8M141.80 444.5V451.2M143.30 444.7V449.9M144.80 445.5V449.4M146.30 445.3V450.0M147.80 444.4V451.5M149.30 447.1V450.1M150.80 444.0V451.1M152.30 446.3V452.2M153.80 449.4V453.4M155.30 451.2V456.2M156.80 450.0V456.5M158.30 446.5V454.1M159.80 447.7V452.0M161.30 446.4V452.7M162.80 447.4V453.4M164.30 449.2V456.0M165.80 452.2V457.5M167.30 452.5V456.8M168.80 454.2V457.7M170.30 450.4V457.8M171.80 449.4V456.1M173.30 448.9V455.9M174.80 450.7V457.7M176.30 452.1V464.4M177.80 452.4V458.6M179.30 450.1V456.5M180.80 448.9V455.3M182.30 446.4V451.7M183.80 445.7V452.1M185.30 449.4V453.6M186.80 450.1V453.5M188.30 449.6V453.0M189.80 447.6V455.0M191.30 447.8V451.3M192.80 445.8V450.5M194.30 446.1V450.6M195.80 444.1V449.5M197.30 441.7V446.0M198.80 440.2V447.6M200.30 444.0V450.6M201.80 443.4V450.3M203.30 445.3V449.4M204.80 442.2V447.4M206.30 442.0V446.9M207.80 437.9V442.8M209.30 433.8V439.2M210.80 429.0V434.4M212.30 427.4V434.3M213.80 428.0V432.9M215.30 427.3V433.8M216.80 427.4V431.8M218.30 423.1V430.4M219.80 412.0V436.5M221.30 410.7V416.8M222.80 412.4V418.9M224.30 416.3V420.3M225.80 418.3V425.4M227.30 424.8V430.3M228.80 428.9V433.9M230.30 427.1V433.9M231.80 425.6V431.0M233.30 419.1V426.2M234.80 412.1V419.7M236.30 406.2V412.7M237.80 402.9V407.5M239.30 404.7V409.6M240.80 405.9V409.5M242.30 406.1V410.0M243.80 404.5V411.7M245.30 408.8V413.7M246.80 412.2V418.4M248.30 414.7V421.9M249.80 417.3V422.7M251.30 417.8V422.8M252.80 411.5V419.1M254.30 411.7V418.1M255.80 408.4V415.4M257.30 412.9V415.9M258.80 413.7V417.2M260.30 412.9V420.5M261.80 415.3V419.1M263.30 412.8V418.9M264.80 412.2V415.8M266.30 410.4V413.8M267.80 407.0V414.6M269.30 405.0V409.6M270.80 401.3V406.6M272.30 401.3V406.5M273.80 400.1V403.4M275.30 397.8V403.7M276.80 394.7V401.7M278.30 393.4V399.5M279.80 396.5V401.3M281.30 398.2V402.0M282.80 395.3V398.8M284.30 393.7V397.4M285.80 391.4V397.5M287.30 392.2V396.7M288.80 391.0V397.8M290.30 392.4V398.4M291.80 394.2V400.5M293.30 393.9V401.1M294.80 396.8V400.1M296.30 394.7V401.2M297.80 395.1V400.3" class="bars"/>
<path d="M10.90 386.01H300.66V488.73H10.90Z" class="frame"/>
<path d="M300.66 387.13h2.2M300.66 411.98h2.2M300.66 436.83h2.2M300.66 461.68h2.2M300.66 486.53h2.2M10.90 488.73v2.6M59.88 488.73v2.6M107.86 488.73v2.6M155.84 488.73v2.6M203.81 488.73v2.6M251.79 488.73v2.6" class="frame"/>
<path d="M14.30 390.61h5.2l-2.6 2.8z" fill="#fff"/>
<text x="22.50" y="394.21" class="ct" textLength="153.03" lengthAdjust="spacingAndGlyphs" xml:space="preserve">EURAUD,H4  1.54611 1.54716 1.54377 1.54665</text>
<text x="10.30" y="498.23" class="ct" textLength="39.88" lengthAdjust="spacingAndGlyphs" xml:space="preserve">30 Aug 2022</text>
<text x="59.08" y="498.23" class="ct" textLength="38.30" lengthAdjust="spacingAndGlyphs" xml:space="preserve">7 Sep 00:00</text>
<text x="107.06" y="498.23" class="ct" textLength="42.24" lengthAdjust="spacingAndGlyphs" xml:space="preserve">14 Sep 08:00</text>
<text x="155.04" y="498.23" class="ct" textLength="42.24" lengthAdjust="spacingAndGlyphs" xml:space="preserve">21 Sep 16:00</text>
<text x="203.01" y="498.23" class="ct" textLength="42.24" lengthAdjust="spacingAndGlyphs" xml:space="preserve">29 Sep 00:00</text>
<text x="250.99" y="498.23" class="ct" textLength="36.71" lengthAdjust="spacingAndGlyphs" xml:space="preserve">6 Oct 08:00</text>
<text x="304.86" y="389.83" class="ct" textLength="25.67" lengthAdjust="spacingAndGlyphs" xml:space="preserve">1.55910</text>
<text x="304.86" y="414.68" class="ct" textLength="25.14" lengthAdjust="spacingAndGlyphs" xml:space="preserve">1.53110</text>
<text x="304.86" y="439.53" class="ct" textLength="25.67" lengthAdjust="spacingAndGlyphs" xml:space="preserve">1.50310</text>
<text x="304.86" y="464.38" class="ct" textLength="25.67" lengthAdjust="spacingAndGlyphs" xml:space="preserve">1.47510</text>
<text x="304.86" y="489.23" class="ct" textLength="25.67" lengthAdjust="spacingAndGlyphs" xml:space="preserve">1.44790</text>
<rect x="301.96" y="393.70" width="29.60" height="7.6" fill="#fff"/>
<text x="304.86" y="400.20" class="ct" textLength="25.67" lengthAdjust="spacingAndGlyphs" xml:space="preserve" style="fill:#000">1.54665</text>
</svg>
</div></div></div></div><div class="mw" style="left:456.7px;top:72px;width:454.7px;height:203.5px">
<div class="mwin"><div class="cap"><svg class="wi" width="15" height="15" viewBox="0 0 15 15"><rect x=".6" y=".6" width="9.800" height="8.800" rx="1.200" fill="#fff" stroke="#4f97e0" stroke-width="1.200"/><path d="M2.500 3h2.500v2h-2.500zM6 3h3v1h-3z" fill="#5ea2e6"/><rect x="3.600" y="5.100" width="10.800" height="9.300" rx="1.200" fill="#fff" stroke="#3f8be0" stroke-width="1.200"/><path d="M5.500 8h3v1.200h-3zM9.500 8h3v1.200h-3z" fill="#8bbcf0"/><path d="M6 10.200h2.600v2.600h-2.600zM9.800 10.200h2.600v2.600h-2.600z" fill="none" stroke="#2f7ad6" stroke-width=".9"/></svg><span class="ttl"><b class="fx" style="transform:scaleX(0.879)">EURJPY,H4</b></span>
<span class="wb" style="right:76px"><i class="bmin"></i></span><span class="wb" style="right:42px"><i class="bres"></i></span><span class="wb" style="right:8px"><svg width="12" height="10" viewBox="0 0 12 10"><path d="M1.5 1l9 8M10.5 1l-9 8" stroke="#8490a0" stroke-width="4.2"/><path d="M1.5 1l9 8M10.5 1l-9 8" stroke="#fff" stroke-width="2.3"/></svg></span></div>
<div class="edge" style="left:7px;top:29.6px;width:436.7px;height:162.9px"><div class="chart">
<svg class="cs" width="434.7" height="160.9" viewBox="349.854 78.412 325.866 120.616">
<path d="M376.15 80.91V183.63M400.14 80.91V183.63M424.13 80.91V183.63M448.12 80.91V183.63M472.11 80.91V183.63M496.10 80.91V183.63M520.08 80.91V183.63M544.07 80.91V183.63M568.06 80.91V183.63M592.05 80.91V183.63M616.04 80.91V183.63M351.75 82.03H641.52M351.75 106.88H641.52M351.75 131.73H641.52M351.75 156.58H641.52M351.75 181.43H641.52" class="grid"/>
<path d="M351.75 122.10H641.52" class="bid"/>
<path d="M353.65 143.1V147.4M355.15 142.5V148.6M356.65 143.2V149.9M358.15 144.8V150.9M359.65 146.2V151.1M361.15 145.9V151.4M362.65 145.6V153.0M364.15 147.2V151.8M365.65 148.1V152.3M367.15 148.6V151.7M368.65 148.4V153.2M370.15 148.2V153.8M371.65 147.8V154.8M373.15 148.3V154.4M374.65 150.3V156.7M376.15 150.7V157.2M377.65 151.2V158.1M379.15 152.0V159.2M380.65 152.6V158.1M382.15 152.5V159.5M383.65 152.4V159.5M385.15 154.9V158.6M386.65 152.9V159.3M388.15 151.8V159.3M389.65 151.2V158.1M391.15 150.8V154.9M392.65 145.8V152.0M394.15 139.1V146.4M395.65 135.3V140.2M397.15 131.8V136.4M398.65 129.2V134.6M400.15 127.7V133.1M401.65 122.5V130.1M403.15 116.1V123.1M404.65 110.5V116.7M406.15 104.0V111.1M407.65 102.6V109.9M409.15 104.3V107.6M410.65 102.6V110.1M412.15 103.6V110.8M413.65 106.0V109.3M415.15 104.0V110.9M416.65 101.5V106.1M418.15 101.9V105.1M419.65 100.0V104.8M421.15 102.9V110.3M422.65 107.1V114.1M424.15 110.8V117.9M425.65 109.1V116.0M427.15 106.1V111.7M428.65 100.9V106.7M430.15 95.0V101.5M431.65 86.9V100.3M433.15 95.6V100.0M434.65 98.2V101.4M436.15 95.9V103.1M437.65 96.7V102.2M439.15 95.8V102.5M440.65 96.4V101.1M442.15 95.8V99.5M443.65 95.8V102.4M445.15 99.8V104.6M446.65 101.5V106.7M448.15 106.1V110.7M449.65 110.1V115.1M451.15 113.7V124.8M452.65 116.6V120.6M454.15 115.1V120.6M455.65 114.5V118.1M457.15 112.5V117.7M458.65 108.6V116.0M460.15 110.3V114.2M461.65 109.1V112.9M463.15 110.4V116.0M464.65 111.4V117.2M466.15 112.0V116.3M467.65 113.7V119.5M469.15 114.9V118.1M470.65 113.8V120.7M472.15 112.4V118.9M473.65 112.3V119.5M475.15 113.3V117.0M476.65 111.6V116.6M478.15 109.4V116.3M479.65 109.1V115.7M481.15 106.5V113.8M482.65 108.5V111.9M484.15 104.1V111.4M485.65 103.7V109.7M487.15 108.3V113.8M488.65 110.2V113.5M490.15 109.7V116.7M491.65 112.7V116.0M493.15 112.2V118.1M494.65 116.8V121.7M496.15 120.8V124.7M497.65 123.2V127.6M499.15 127.0V131.7M500.65 107.0V144.9M502.15 132.4V142.3M503.65 141.7V164.9M505.15 151.2V156.6M506.65 149.4V154.4M508.15 147.6V154.4M509.65 148.2V155.8M511.15 151.5V155.5M512.65 153.5V158.3M514.15 155.7V161.1M515.65 158.5V163.6M517.15 161.4V180.5M518.65 162.7V180.5M520.15 159.6V167.8M521.65 159.1V163.6M523.15 156.7V163.9M524.65 157.0V160.9M526.15 157.9V165.3M527.65 159.3V162.5M529.15 156.8V160.0M530.65 156.4V160.5M532.15 158.3V163.3M533.65 159.7V163.8M535.15 161.4V165.8M536.65 162.7V169.8M538.15 166.7V170.7M539.65 165.8V170.0M541.15 156.9V166.7M542.65 147.5V157.5M544.15 146.7V151.3M545.65 148.5V155.0M547.15 150.6V155.1M548.65 145.3V151.6M550.15 138.2V145.9M551.65 132.7V138.8M553.15 127.8V133.3M554.65 126.3V129.9M556.15 125.9V133.3M557.65 132.7V137.4M559.15 130.1V135.2M560.65 128.3V135.0M562.15 128.1V132.2M563.65 125.6V131.6M565.15 124.8V129.0M566.65 126.3V130.0M568.15 129.4V133.4M569.65 127.9V132.8M571.15 124.1V131.6M572.65 122.2V127.8M574.15 116.9V123.7M575.65 111.6V118.2M577.15 107.0V112.9M578.65 103.0V110.0M580.15 105.1V110.1M581.65 105.3V112.2M583.15 107.7V111.7M584.65 110.5V115.6M586.15 114.4V120.4M587.65 111.6V119.1M589.15 112.3V115.6M590.65 111.0V115.2M592.15 111.6V119.0M593.65 115.0V120.1M595.15 119.5V125.4M596.65 123.5V128.1M598.15 124.9V130.3M599.65 124.7V132.2M601.15 126.8V130.3M602.65 127.3V132.9M604.15 127.2V133.8M605.65 128.9V136.1M607.15 129.5V134.5M608.65 129.1V135.7M610.15 130.6V137.8M611.65 134.3V139.3M613.15 132.5V136.3M614.65 129.7V137.3M616.15 133.5V136.7M617.65 132.4V138.1M619.15 132.7V136.2M620.65 132.1V138.2M622.15 128.1V134.0M623.65 129.7V133.5M625.15 129.2V133.1M626.65 125.6V132.3M628.15 125.9V131.4M629.65 122.1V129.6M631.15 120.7V128.1M632.65 120.2V127.4M634.15 120.1V126.1M635.65 120.3V125.7M637.15 120.4V127.8" class="bars"/>
<path d="M351.75 80.91H641.52V183.63H351.75Z" class="frame"/>
<path d="M641.52 82.03h2.2M641.52 106.88h2.2M641.52 131.73h2.2M641.52 156.58h2.2M641.52 181.43h2.2M351.75 183.63v2.6M400.14 183.63v2.6M448.12 183.63v2.6M496.10 183.63v2.6M544.07 183.63v2.6M592.05 183.63v2.6" class="frame"/>
<path d="M355.15 85.51h5.2l-2.6 2.8z" fill="#fff"/>
<text x="363.35" y="89.11" class="ct" textLength="150.67" lengthAdjust="spacingAndGlyphs" xml:space="preserve">EURJPY,H4  142.489 142.550 142.198 142.508</text>
<text x="351.15" y="193.13" class="ct" textLength="39.88" lengthAdjust="spacingAndGlyphs" xml:space="preserve">30 Aug 2022</text>
<text x="399.34" y="193.13" class="ct" textLength="38.30" lengthAdjust="spacingAndGlyphs" xml:space="preserve">7 Sep 00:00</text>
<text x="447.32" y="193.13" class="ct" textLength="42.24" lengthAdjust="spacingAndGlyphs" xml:space="preserve">14 Sep 08:00</text>
<text x="495.30" y="193.13" class="ct" textLength="42.24" lengthAdjust="spacingAndGlyphs" xml:space="preserve">21 Sep 16:00</text>
<text x="543.27" y="193.13" class="ct" textLength="42.24" lengthAdjust="spacingAndGlyphs" xml:space="preserve">29 Sep 00:00</text>
<text x="591.25" y="193.13" class="ct" textLength="36.71" lengthAdjust="spacingAndGlyphs" xml:space="preserve">6 Oct 08:00</text>
<text x="645.72" y="84.73" class="ct" textLength="25.67" lengthAdjust="spacingAndGlyphs" xml:space="preserve">146.040</text>
<text x="645.72" y="109.58" class="ct" textLength="25.67" lengthAdjust="spacingAndGlyphs" xml:space="preserve">143.820</text>
<text x="645.72" y="134.43" class="ct" textLength="25.67" lengthAdjust="spacingAndGlyphs" xml:space="preserve">141.660</text>
<text x="645.72" y="159.28" class="ct" textLength="25.67" lengthAdjust="spacingAndGlyphs" xml:space="preserve">139.500</text>
<text x="645.72" y="184.13" class="ct" textLength="25.67" lengthAdjust="spacingAndGlyphs" xml:space="preserve">137.340</text>
<rect x="642.82" y="118.30" width="29.60" height="7.6" fill="#fff"/>
<text x="645.72" y="124.80" class="ct" textLength="25.67" lengthAdjust="spacingAndGlyphs" xml:space="preserve" style="fill:#000">142.508</text>
</svg>
</div></div></div></div><div class="mw" style="left:456.7px;top:275.5px;width:454.7px;height:203.5px">
<div class="mwin"><div class="cap"><svg class="wi" width="15" height="15" viewBox="0 0 15 15"><rect x=".6" y=".6" width="9.800" height="8.800" rx="1.200" fill="#fff" stroke="#4f97e0" stroke-width="1.200"/><path d="M2.500 3h2.500v2h-2.500zM6 3h3v1h-3z" fill="#5ea2e6"/><rect x="3.600" y="5.100" width="10.800" height="9.300" rx="1.200" fill="#fff" stroke="#3f8be0" stroke-width="1.200"/><path d="M5.500 8h3v1.200h-3zM9.500 8h3v1.200h-3z" fill="#8bbcf0"/><path d="M6 10.200h2.600v2.600h-2.600zM9.800 10.200h2.600v2.600h-2.600z" fill="none" stroke="#2f7ad6" stroke-width=".9"/></svg><span class="ttl"><b class="fx" style="transform:scaleX(0.890)">GBPJPY,H4</b></span>
<span class="wb" style="right:76px"><i class="bmin"></i></span><span class="wb" style="right:42px"><i class="bres"></i></span><span class="wb" style="right:8px"><svg width="12" height="10" viewBox="0 0 12 10"><path d="M1.5 1l9 8M10.5 1l-9 8" stroke="#8490a0" stroke-width="4.2"/><path d="M1.5 1l9 8M10.5 1l-9 8" stroke="#fff" stroke-width="2.3"/></svg></span></div>
<div class="edge" style="left:7px;top:29.6px;width:436.7px;height:162.9px"><div class="chart">
<svg class="cs" width="434.7" height="160.9" viewBox="349.854 230.962 325.866 120.616">
<path d="M376.15 233.46V336.18M400.14 233.46V336.18M424.13 233.46V336.18M448.12 233.46V336.18M472.11 233.46V336.18M496.10 233.46V336.18M520.08 233.46V336.18M544.07 233.46V336.18M568.06 233.46V336.18M592.05 233.46V336.18M616.04 233.46V336.18M351.75 234.58H641.52M351.75 259.43H641.52M351.75 284.28H641.52M351.75 309.13H641.52M351.75 333.98H641.52" class="grid"/>
<path d="M351.75 263.40H641.52" class="bid"/>
<path d="M353.65 271.1V276.4M355.15 271.7V275.4M356.65 269.3V275.4M358.15 268.4V274.7M359.65 269.7V276.2M361.15 268.7V275.8M362.65 269.5V273.7M364.15 269.7V274.4M365.65 270.1V274.2M367.15 269.0V274.4M368.65 267.8V275.2M370.15 267.7V271.2M371.65 267.2V271.6M373.15 268.0V272.2M374.65 265.4V272.7M376.15 265.7V271.2M377.65 268.0V272.0M379.15 266.6V271.9M380.65 266.1V269.5M382.15 264.3V271.8M383.65 265.7V272.5M385.15 264.5V270.9M386.65 264.8V268.6M388.15 263.5V268.4M389.65 263.7V266.8M391.15 262.9V269.7M392.65 257.1V263.6M394.15 255.2V260.3M395.65 250.4V256.4M397.15 250.4V256.2M398.65 250.1V255.9M400.15 248.3V253.1M401.65 245.1V252.1M403.15 244.5V250.5M404.65 243.7V249.5M406.15 244.4V250.9M407.65 242.8V250.2M409.15 243.1V247.1M410.65 243.9V249.2M412.15 244.8V248.4M413.65 244.9V252.5M415.15 245.8V249.1M416.65 244.6V250.6M418.15 245.3V249.2M419.65 245.6V249.3M421.15 247.8V252.3M422.65 248.7V256.1M424.15 248.4V252.7M425.65 244.9V250.9M427.15 245.6V249.9M428.65 242.8V246.3M430.15 240.9V245.0M431.65 239.7V244.2M433.15 237.5V242.8M434.65 237.9V243.9M436.15 239.0V245.6M437.65 241.2V245.1M439.15 238.9V244.3M440.65 241.6V245.3M442.15 240.6V248.1M443.65 242.0V248.1M445.15 242.0V246.1M446.65 243.4V248.1M448.15 245.2V250.9M449.65 246.0V252.0M451.15 248.2V251.7M452.65 245.7V253.0M454.15 247.2V254.1M455.65 247.4V252.8M457.15 246.9V253.2M458.65 249.3V252.4M460.15 249.1V253.8M461.65 251.8V255.0M463.15 250.0V256.7M464.65 252.8V256.6M466.15 254.1V259.4M467.65 258.5V262.0M469.15 258.6V262.2M470.65 258.2V262.3M472.15 257.5V263.4M473.65 256.6V261.7M475.15 256.5V263.1M476.65 255.6V262.6M478.15 256.8V261.5M479.65 255.3V261.6M481.15 252.8V260.0M482.65 252.5V257.2M484.15 253.1V257.7M485.65 252.8V257.3M487.15 253.9V260.6M488.65 256.2V260.3M490.15 256.6V260.4M491.65 256.6V261.1M493.15 257.3V261.5M494.65 257.7V262.8M496.15 256.7V263.6M497.65 257.8V261.8M499.15 261.1V265.6M500.65 262.4V265.9M502.15 252.3V274.6M503.65 267.5V273.8M505.15 272.0V277.5M506.65 274.2V277.6M508.15 271.8V278.4M509.65 273.8V279.8M511.15 276.9V280.1M512.65 277.7V284.8M514.15 283.4V291.7M515.65 291.1V298.4M517.15 297.5V308.5M518.65 303.6V333.7M520.15 296.9V328.1M521.65 297.2V306.6M523.15 293.3V299.4M524.65 298.7V303.3M526.15 298.7V302.1M527.65 295.0V302.5M529.15 295.1V298.8M530.65 292.8V300.4M532.15 295.6V299.6M533.65 296.0V302.9M535.15 298.4V303.5M536.65 301.7V304.9M538.15 299.7V307.2M539.65 299.1V314.7M541.15 295.2V302.6M542.65 293.1V298.8M544.15 293.4V297.0M545.65 292.8V299.7M547.15 291.4V298.5M548.65 289.3V295.7M550.15 282.0V289.9M551.65 276.0V282.6M553.15 272.0V276.7M554.65 265.8V272.7M556.15 268.0V274.2M557.65 268.4V271.7M559.15 266.8V274.0M560.65 266.4V272.6M562.15 267.7V271.3M563.65 268.2V272.4M565.15 264.0V268.8M566.65 262.4V266.0M568.15 260.6V265.5M569.65 257.8V262.0M571.15 253.7V261.3M572.65 253.9V260.4M574.15 252.7V259.1M575.65 250.0V257.5M577.15 250.0V254.0M578.65 246.1V253.3M580.15 247.1V254.0M581.65 248.2V252.8M583.15 248.8V253.6M584.65 252.1V256.4M586.15 253.7V259.3M587.65 254.2V261.2M589.15 254.1V260.4M590.65 252.2V256.6M592.15 254.2V259.3M593.65 255.7V263.1M595.15 259.2V266.4M596.65 264.1V268.1M598.15 264.6V269.0M599.65 264.2V270.3M601.15 263.1V269.9M602.65 266.1V269.8M604.15 266.6V271.5M605.65 265.9V273.3M607.15 267.2V273.4M608.65 268.5V271.7M610.15 269.2V273.4M611.65 268.9V273.7M613.15 269.0V273.6M614.65 268.9V275.7M616.15 269.7V273.9M617.65 267.8V274.1M619.15 266.5V273.6M620.65 266.0V272.1M622.15 265.3V269.0M623.65 262.9V268.7M625.15 268.1V274.2M626.65 269.5V275.9M628.15 269.9V274.7M629.65 266.6V270.5M631.15 262.2V268.0M632.65 258.7V264.7M634.15 260.7V264.0M635.65 257.8V264.3M637.15 259.9V264.1M638.65 260.6V266.9" class="bars"/>
<path d="M351.75 233.46H641.52V336.18H351.75Z" class="frame"/>
<path d="M641.52 234.58h2.2M641.52 259.43h2.2M641.52 284.28h2.2M641.52 309.13h2.2M641.52 333.98h2.2M351.75 336.18v2.6M400.14 336.18v2.6M448.12 336.18v2.6M496.10 336.18v2.6M544.07 336.18v2.6M592.05 336.18v2.6" class="frame"/>
<path d="M355.15 238.06h5.2l-2.6 2.8z" fill="#fff"/>
<text x="363.35" y="241.66" class="ct" textLength="150.67" lengthAdjust="spacingAndGlyphs" xml:space="preserve">GBPJPY,H4  162.826 162.870 162.319 162.655</text>
<text x="351.15" y="345.68" class="ct" textLength="39.88" lengthAdjust="spacingAndGlyphs" xml:space="preserve">30 Aug 2022</text>
<text x="399.34" y="345.68" class="ct" textLength="38.30" lengthAdjust="spacingAndGlyphs" xml:space="preserve">7 Sep 00:00</text>
<text x="447.32" y="345.68" class="ct" textLength="42.24" lengthAdjust="spacingAndGlyphs" xml:space="preserve">14 Sep 08:00</text>
<text x="495.30" y="345.68" class="ct" textLength="42.24" lengthAdjust="spacingAndGlyphs" xml:space="preserve">21 Sep 16:00</text>
<text x="543.27" y="345.68" class="ct" textLength="42.24" lengthAdjust="spacingAndGlyphs" xml:space="preserve">29 Sep 00:00</text>
<text x="591.25" y="345.68" class="ct" textLength="36.71" lengthAdjust="spacingAndGlyphs" xml:space="preserve">6 Oct 08:00</text>
<text x="645.72" y="237.28" class="ct" textLength="25.67" lengthAdjust="spacingAndGlyphs" xml:space="preserve">168.170</text>
<text x="645.72" y="262.13" class="ct" textLength="25.67" lengthAdjust="spacingAndGlyphs" xml:space="preserve">163.410</text>
<text x="645.72" y="286.98" class="ct" textLength="25.67" lengthAdjust="spacingAndGlyphs" xml:space="preserve">158.510</text>
<text x="645.72" y="311.83" class="ct" textLength="25.67" lengthAdjust="spacingAndGlyphs" xml:space="preserve">153.610</text>
<text x="645.72" y="336.68" class="ct" textLength="25.67" lengthAdjust="spacingAndGlyphs" xml:space="preserve">148.850</text>
<rect x="642.82" y="259.60" width="29.60" height="7.6" fill="#fff"/>
<text x="645.72" y="266.10" class="ct" textLength="25.67" lengthAdjust="spacingAndGlyphs" xml:space="preserve" style="fill:#000">162.655</text>
</svg>
</div></div></div></div><div class="mw" style="left:456.7px;top:479px;width:454.7px;height:203.5px">
<div class="mwin"><div class="cap"><svg class="wi" width="15" height="15" viewBox="0 0 15 15"><rect x=".6" y=".6" width="9.800" height="8.800" rx="1.200" fill="#fff" stroke="#4f97e0" stroke-width="1.200"/><path d="M2.500 3h2.500v2h-2.500zM6 3h3v1h-3z" fill="#5ea2e6"/><rect x="3.600" y="5.100" width="10.800" height="9.300" rx="1.200" fill="#fff" stroke="#3f8be0" stroke-width="1.200"/><path d="M5.500 8h3v1.200h-3zM9.500 8h3v1.200h-3z" fill="#8bbcf0"/><path d="M6 10.200h2.600v2.600h-2.600zM9.800 10.200h2.600v2.600h-2.600z" fill="none" stroke="#2f7ad6" stroke-width=".9"/></svg><span class="ttl"><b class="fx" style="transform:scaleX(0.926)">AUDJPY,H4</b></span>
<span class="wb" style="right:76px"><i class="bmin"></i></span><span class="wb" style="right:42px"><i class="bres"></i></span><span class="wb" style="right:8px"><svg width="12" height="10" viewBox="0 0 12 10"><path d="M1.5 1l9 8M10.5 1l-9 8" stroke="#8490a0" stroke-width="4.2"/><path d="M1.5 1l9 8M10.5 1l-9 8" stroke="#fff" stroke-width="2.3"/></svg></span></div>
<div class="edge" style="left:7px;top:29.6px;width:436.7px;height:162.9px"><div class="chart">
<svg class="cs" width="434.7" height="160.9" viewBox="349.854 383.513 325.866 120.616">
<path d="M376.15 386.01V488.73M400.14 386.01V488.73M424.13 386.01V488.73M448.12 386.01V488.73M472.11 386.01V488.73M496.10 386.01V488.73M520.08 386.01V488.73M544.07 386.01V488.73M568.06 386.01V488.73M592.05 386.01V488.73M616.04 386.01V488.73M640.03 386.01V488.73M351.75 387.13H645.42M351.75 411.98H645.42M351.75 436.83H645.42M351.75 461.68H645.42M351.75 486.53H645.42" class="grid"/>
<path d="M351.75 472.80H645.42" class="bid"/>
<path d="M353.65 422.0V434.3M355.15 429.3V434.8M356.65 431.7V435.6M358.15 431.6V437.3M359.65 431.4V437.9M361.15 432.3V436.2M362.65 431.7V438.4M364.15 432.1V437.7M365.65 433.9V437.7M367.15 435.2V438.5M368.65 434.0V440.5M370.15 433.8V438.4M371.65 432.4V439.3M373.15 432.6V440.0M374.65 433.9V438.7M376.15 433.6V437.5M377.65 432.5V437.0M379.15 429.6V433.5M380.65 424.7V430.2M382.15 425.2V430.4M383.65 428.3V433.3M385.15 431.2V436.3M386.65 430.7V437.4M388.15 430.2V433.7M389.65 430.7V433.8M391.15 428.1V431.9M392.65 427.1V432.3M394.15 426.9V430.3M395.65 423.5V430.3M397.15 421.4V426.6M398.65 421.2V427.0M400.15 417.8V423.0M401.65 415.8V421.5M403.15 414.5V421.7M404.65 413.9V419.2M406.15 411.2V416.9M407.65 409.1V413.6M409.15 405.6V412.7M410.65 404.7V411.3M412.15 404.6V412.1M413.65 407.1V411.3M415.15 407.7V414.0M416.65 410.5V415.3M418.15 409.0V412.3M419.65 405.2V410.7M421.15 404.7V408.5M422.65 402.7V406.2M424.15 401.0V408.4M425.65 402.4V409.0M427.15 401.7V407.8M428.65 404.0V407.2M430.15 399.7V412.0M431.65 400.6V404.9M433.15 397.7V402.0M434.65 392.7V399.9M436.15 394.4V398.8M437.65 394.0V401.6M439.15 394.6V400.7M440.65 394.9V402.3M442.15 395.5V402.0M443.65 396.2V400.2M445.15 398.0V403.6M446.65 401.3V407.3M448.15 404.6V408.7M449.65 405.6V412.9M451.15 410.4V415.0M452.65 413.4V418.5M454.15 416.6V420.5M455.65 414.2V420.4M457.15 412.8V417.9M458.65 413.0V417.0M460.15 411.8V416.9M461.65 412.1V417.2M463.15 414.6V419.7M464.65 417.0V423.3M466.15 418.2V424.7M467.65 420.4V427.7M469.15 420.7V427.3M470.65 421.6V428.4M472.15 421.8V429.3M473.65 422.2V428.3M475.15 421.9V425.7M476.65 420.6V425.9M478.15 421.4V427.3M479.65 420.7V426.5M481.15 421.7V425.4M482.65 418.9V422.5M484.15 416.8V420.9M485.65 416.1V419.4M487.15 417.7V421.6M488.65 417.9V421.1M490.15 417.7V424.8M491.65 420.3V425.5M493.15 420.8V426.0M494.65 421.0V426.4M496.15 421.3V424.7M497.65 421.3V427.0M499.15 418.8V425.7M500.65 421.7V427.1M502.15 423.0V430.4M503.65 425.9V432.9M505.15 417.6V441.0M506.65 437.8V450.8M508.15 441.9V446.7M509.65 440.3V445.9M511.15 440.5V445.5M512.65 443.2V447.8M514.15 446.0V449.8M515.65 446.7V452.4M517.15 447.7V453.2M518.65 450.1V456.5M520.15 451.1V457.9M521.65 450.5V455.1M523.15 450.1V455.0M524.65 450.7V454.8M526.15 453.3V457.2M527.65 451.6V457.1M529.15 452.5V455.9M530.65 449.3V456.8M532.15 449.7V456.7M533.65 450.9V455.8M535.15 454.7V458.8M536.65 456.1V461.4M538.15 459.6V463.3M539.65 460.9V465.2M541.15 462.3V468.5M542.65 463.0V469.4M544.15 455.0V463.6M545.65 449.5V455.6M547.15 447.2V453.4M548.65 449.1V455.0M550.15 450.7V457.0M551.65 449.8V457.0M553.15 450.8V455.8M554.65 450.3V453.6M556.15 447.0V452.5M557.65 449.0V452.2M559.15 449.0V452.9M560.65 450.5V455.3M562.15 454.7V461.3M563.65 458.8V464.5M565.15 457.1V464.4M566.65 457.6V461.2M568.15 454.0V458.2M569.65 449.5V455.6M571.15 448.0V454.9M572.65 445.1V450.4M574.15 446.4V450.0M575.65 443.5V450.5M577.15 439.8V454.3M578.65 444.8V452.4M580.15 449.6V454.7M581.65 450.8V455.4M583.15 451.4V457.6M584.65 452.0V457.9M586.15 453.1V457.5M587.65 454.4V459.5M589.15 452.1V456.9M590.65 450.3V455.0M592.15 446.1V450.9M593.65 443.2V449.9M595.15 445.2V451.7M596.65 447.2V454.1M598.15 453.2V460.0M599.65 455.6V462.9M601.15 457.8V462.5M602.65 459.3V464.2M604.15 460.7V466.0M605.65 459.8V466.4M607.15 460.7V465.8M608.65 461.9V468.3M610.15 464.6V469.3M611.65 467.7V474.1M613.15 470.1V473.9M614.65 470.9V476.9M616.15 473.3V478.9M617.65 473.4V478.1M619.15 474.6V478.4M620.65 475.3V481.8M622.15 477.4V483.1M623.65 477.9V485.0M625.15 476.7V481.5M626.65 473.9V481.0M628.15 478.4V481.6M629.65 477.3V484.1M631.15 474.4V481.3M632.65 474.3V478.3M634.15 469.9V476.1M635.65 469.1V472.7M637.15 468.0V473.0M638.65 468.7V474.1M640.15 471.0V475.1" class="bars"/>
<path d="M351.75 386.01H645.42V488.73H351.75Z" class="frame"/>
<path d="M645.42 387.13h2.2M645.42 411.98h2.2M645.42 436.83h2.2M645.42 461.68h2.2M645.42 486.53h2.2M351.75 488.73v2.6M400.14 488.73v2.6M448.12 488.73v2.6M496.10 488.73v2.6M544.07 488.73v2.6M592.05 488.73v2.6M640.03 488.73v2.6" class="frame"/>
<path d="M355.15 390.61h5.2l-2.6 2.8z" fill="#fff"/>
<text x="363.35" y="394.21" class="ct" textLength="134.88" lengthAdjust="spacingAndGlyphs" xml:space="preserve">AUDJPY,H4  92.157 92.263 91.972 92.136</text>
<text x="351.15" y="498.23" class="ct" textLength="39.88" lengthAdjust="spacingAndGlyphs" xml:space="preserve">30 Aug 2022</text>
<text x="399.34" y="498.23" class="ct" textLength="38.30" lengthAdjust="spacingAndGlyphs" xml:space="preserve">6 Sep 16:00</text>
<text x="447.32" y="498.23" class="ct" textLength="42.24" lengthAdjust="spacingAndGlyphs" xml:space="preserve">14 Sep 00:00</text>
<text x="495.30" y="498.23" class="ct" textLength="42.24" lengthAdjust="spacingAndGlyphs" xml:space="preserve">21 Sep 08:00</text>
<text x="543.27" y="498.23" class="ct" textLength="42.24" lengthAdjust="spacingAndGlyphs" xml:space="preserve">28 Sep 16:00</text>
<text x="591.25" y="498.23" class="ct" textLength="36.71" lengthAdjust="spacingAndGlyphs" xml:space="preserve">6 Oct 00:00</text>
<text x="639.23" y="498.23" class="ct" textLength="40.66" lengthAdjust="spacingAndGlyphs" xml:space="preserve">13 Oct 08:00</text>
<text x="649.62" y="389.83" class="ct" textLength="21.72" lengthAdjust="spacingAndGlyphs" xml:space="preserve">98.965</text>
<text x="649.62" y="414.68" class="ct" textLength="21.72" lengthAdjust="spacingAndGlyphs" xml:space="preserve">96.985</text>
<text x="649.62" y="439.53" class="ct" textLength="21.72" lengthAdjust="spacingAndGlyphs" xml:space="preserve">95.005</text>
<text x="649.62" y="464.38" class="ct" textLength="21.72" lengthAdjust="spacingAndGlyphs" xml:space="preserve">93.025</text>
<text x="649.62" y="489.23" class="ct" textLength="21.72" lengthAdjust="spacingAndGlyphs" xml:space="preserve">91.045</text>
<rect x="646.72" y="469.00" width="25.70" height="7.6" fill="#fff"/>
<text x="649.62" y="475.50" class="ct" textLength="21.72" lengthAdjust="spacingAndGlyphs" xml:space="preserve" style="fill:#000">92.136</text>
</svg>
</div></div></div></div><div class="mw" style="left:911.4px;top:72px;width:454.6px;height:152.6px">
<div class="mwin"><div class="cap"><svg class="wi" width="15" height="15" viewBox="0 0 15 15"><rect x=".6" y=".6" width="9.800" height="8.800" rx="1.200" fill="#fff" stroke="#4f97e0" stroke-width="1.200"/><path d="M2.500 3h2.500v2h-2.500zM6 3h3v1h-3z" fill="#5ea2e6"/><rect x="3.600" y="5.100" width="10.800" height="9.300" rx="1.200" fill="#fff" stroke="#3f8be0" stroke-width="1.200"/><path d="M5.500 8h3v1.200h-3zM9.500 8h3v1.200h-3z" fill="#8bbcf0"/><path d="M6 10.200h2.600v2.600h-2.600zM9.800 10.200h2.600v2.600h-2.600z" fill="none" stroke="#2f7ad6" stroke-width=".9"/></svg><span class="ttl"><b class="fx" style="transform:scaleX(0.916)">GBPAUD,H4</b></span>
<span class="wb" style="right:76px"><i class="bmin"></i></span><span class="wb" style="right:42px"><i class="bres"></i></span><span class="wb" style="right:8px"><svg width="12" height="10" viewBox="0 0 12 10"><path d="M1.5 1l9 8M10.5 1l-9 8" stroke="#8490a0" stroke-width="4.2"/><path d="M1.5 1l9 8M10.5 1l-9 8" stroke="#fff" stroke-width="2.3"/></svg></span></div>
<div class="edge" style="left:7px;top:29.6px;width:436.6px;height:112.0px"><div class="chart">
<svg class="cs" width="434.6" height="110.0" viewBox="690.713 78.412 325.791 82.460">
<path d="M717.91 80.91V145.47M741.90 80.91V145.47M765.89 80.91V145.47M789.88 80.91V145.47M813.87 80.91V145.47M837.85 80.91V145.47M861.84 80.91V145.47M885.83 80.91V145.47M909.82 80.91V145.47M933.81 80.91V145.47M957.80 80.91V145.47M692.61 93.57H982.30M692.61 118.42H982.30M692.61 143.27H982.30" class="grid"/>
<path d="M692.61 87.00H982.30" class="bid"/>
<path d="M694.51 106.2V109.9M696.01 107.3V109.1M697.51 106.8V109.5M699.01 107.3V110.7M700.51 107.2V110.1M702.01 107.9V109.7M703.51 107.4V109.3M705.01 106.6V108.7M706.51 106.3V109.7M708.01 106.6V110.4M709.51 107.2V110.6M711.01 106.6V109.0M712.51 106.0V108.7M714.01 106.1V109.3M715.51 107.1V109.3M717.01 107.2V109.1M718.51 107.5V110.3M720.01 108.6V111.4M721.51 109.1V112.3M723.01 109.0V112.4M724.51 109.6V111.3M726.01 109.1V112.1M727.51 108.9V111.3M729.01 108.7V110.7M730.51 108.0V111.4M732.01 107.5V109.6M733.51 106.3V108.8M735.01 104.5V106.9M736.51 102.8V105.1M738.01 102.7V104.7M739.51 103.3V105.0M741.01 103.0V105.3M742.51 102.5V106.2M744.01 103.3V106.8M745.51 104.9V107.3M747.01 105.5V107.5M748.51 105.4V107.2M750.01 105.4V107.3M751.51 104.6V107.2M753.01 104.2V106.2M754.51 103.8V106.2M756.01 103.5V107.1M757.51 105.7V107.6M759.01 106.5V108.4M760.51 105.7V109.4M762.01 106.7V110.3M763.51 107.5V111.0M765.01 107.4V110.9M766.51 107.4V109.9M768.01 106.6V108.5M769.51 107.4V109.8M771.01 107.8V109.8M772.51 106.5V109.9M774.01 106.9V109.2M775.51 105.9V109.6M777.01 106.4V109.9M778.51 106.3V109.0M780.01 106.8V109.0M781.51 105.8V108.8M783.01 105.5V108.4M784.51 104.8V108.0M786.01 103.5V106.7M787.51 103.4V105.6M789.01 102.5V104.7M790.51 100.3V103.7M792.01 100.7V104.5M793.51 103.2V105.4M795.01 103.7V107.2M796.51 104.0V105.5M798.01 103.8V106.4M799.51 103.4V106.6M801.01 103.4V106.0M802.51 102.8V106.4M804.01 103.2V106.2M805.51 103.0V106.7M807.01 105.5V107.7M808.51 105.6V108.4M810.01 104.8V108.5M811.51 106.3V109.1M813.01 105.8V109.3M814.51 106.2V109.3M816.01 107.1V108.9M817.51 105.8V108.6M819.01 106.0V107.7M820.51 106.2V109.0M822.01 106.4V110.0M823.51 106.3V109.0M825.01 106.0V108.1M826.51 104.8V108.1M828.01 105.2V107.9M829.51 105.6V109.1M831.01 105.7V107.3M832.51 105.8V107.8M834.01 105.6V108.5M835.51 106.5V108.8M837.01 106.3V109.7M838.51 105.0V110.4M840.01 106.2V109.2M841.51 105.6V108.4M843.01 103.6V108.4M844.51 104.5V109.7M846.01 104.7V110.7M847.51 107.4V110.7M849.01 106.3V111.1M850.51 106.3V111.6M852.01 105.2V110.7M853.51 106.8V112.3M855.01 111.7V117.9M856.51 116.8V122.7M858.01 122.1V130.0M859.51 125.8V143.9M861.01 122.8V130.9M862.51 117.4V123.4M864.01 117.4V121.8M865.51 118.3V122.8M867.01 119.3V124.2M868.51 118.3V122.6M870.01 116.7V122.4M871.51 115.3V121.3M873.01 116.9V121.9M874.51 116.6V122.1M876.01 116.0V120.8M877.51 116.7V120.4M879.01 115.9V119.0M880.51 111.2V125.0M882.01 117.3V121.8M883.51 117.3V121.7M885.01 116.8V119.7M886.51 116.2V120.9M888.01 114.9V119.2M889.51 112.1V116.8M891.01 107.2V112.7M892.51 104.2V108.0M894.01 100.8V106.6M895.51 102.0V104.8M897.01 100.1V104.2M898.51 100.4V106.3M900.01 97.3V101.8M901.51 92.7V98.0M903.01 93.5V96.2M904.51 95.0V99.0M906.01 93.9V98.9M907.51 91.5V96.7M909.01 94.4V99.3M910.51 94.2V96.8M912.01 92.1V96.9M913.51 91.8V97.2M915.01 90.9V94.7M916.51 89.1V94.6M918.01 85.7V90.6M919.51 83.2V87.3M921.01 84.0V88.5M922.51 85.5V88.9M924.01 84.9V90.4M925.51 85.6V90.2M927.01 86.9V92.5M928.51 90.8V95.1M930.01 90.6V94.0M931.51 90.6V95.5M933.01 92.0V96.3M934.51 92.1V95.2M936.01 92.2V95.3M937.51 91.7V95.9M939.01 91.8V96.4M940.51 92.2V97.3M942.01 92.3V94.7M943.51 91.4V94.8M945.01 91.5V95.6M946.51 92.2V96.7M948.01 91.5V96.2M949.51 90.7V94.9M951.01 88.3V93.1M952.51 88.4V93.0M954.01 88.6V92.0M955.51 87.0V92.0M957.01 86.5V90.7M958.51 85.7V88.7M960.01 84.6V88.8M961.51 84.3V88.5M963.01 86.1V90.3M964.51 87.3V90.4M966.01 89.5V92.6M967.51 86.9V92.9M969.01 87.7V90.8M970.51 85.2V90.0M972.01 84.3V87.1M973.51 82.9V87.8M975.01 84.6V87.8M976.51 84.8V88.9M978.01 85.6V89.3" class="bars"/>
<path d="M692.61 80.91H982.30V145.47H692.61Z" class="frame"/>
<path d="M982.30 93.57h2.2M982.30 118.42h2.2M982.30 143.27h2.2M692.61 145.47v2.6M741.90 145.47v2.6M789.88 145.47v2.6M837.85 145.47v2.6M885.83 145.47v2.6M933.81 145.47v2.6" class="frame"/>
<path d="M696.01 85.51h5.2l-2.6 2.8z" fill="#fff"/>
<text x="704.21" y="89.11" class="ct" textLength="153.03" lengthAdjust="spacingAndGlyphs" xml:space="preserve">GBPAUD,H4  1.76680 1.76725 1.76334 1.76532</text>
<text x="692.01" y="154.97" class="ct" textLength="39.88" lengthAdjust="spacingAndGlyphs" xml:space="preserve">30 Aug 2022</text>
<text x="741.10" y="154.97" class="ct" textLength="38.30" lengthAdjust="spacingAndGlyphs" xml:space="preserve">7 Sep 00:00</text>
<text x="789.08" y="154.97" class="ct" textLength="42.24" lengthAdjust="spacingAndGlyphs" xml:space="preserve">14 Sep 08:00</text>
<text x="837.05" y="154.97" class="ct" textLength="42.24" lengthAdjust="spacingAndGlyphs" xml:space="preserve">21 Sep 16:00</text>
<text x="885.03" y="154.97" class="ct" textLength="42.24" lengthAdjust="spacingAndGlyphs" xml:space="preserve">29 Sep 00:00</text>
<text x="933.01" y="154.97" class="ct" textLength="36.71" lengthAdjust="spacingAndGlyphs" xml:space="preserve">6 Oct 08:00</text>
<text x="986.50" y="96.27" class="ct" textLength="25.67" lengthAdjust="spacingAndGlyphs" xml:space="preserve">1.74300</text>
<text x="986.50" y="121.12" class="ct" textLength="25.67" lengthAdjust="spacingAndGlyphs" xml:space="preserve">1.66875</text>
<text x="986.50" y="145.97" class="ct" textLength="25.67" lengthAdjust="spacingAndGlyphs" xml:space="preserve">1.59225</text>
<rect x="983.60" y="83.20" width="29.60" height="7.6" fill="#fff"/>
<text x="986.50" y="89.70" class="ct" textLength="25.67" lengthAdjust="spacingAndGlyphs" xml:space="preserve" style="fill:#000">1.76532</text>
</svg>
</div></div></div></div><div class="mw" style="left:911.4px;top:224.6px;width:454.6px;height:152.6px">
<div class="mwin"><div class="cap"><svg class="wi" width="15" height="15" viewBox="0 0 15 15"><rect x=".6" y=".6" width="9.800" height="8.800" rx="1.200" fill="#fff" stroke="#4f97e0" stroke-width="1.200"/><path d="M2.500 3h2.500v2h-2.500zM6 3h3v1h-3z" fill="#5ea2e6"/><rect x="3.600" y="5.100" width="10.800" height="9.300" rx="1.200" fill="#fff" stroke="#3f8be0" stroke-width="1.200"/><path d="M5.500 8h3v1.200h-3zM9.500 8h3v1.200h-3z" fill="#8bbcf0"/><path d="M6 10.200h2.600v2.600h-2.600zM9.800 10.200h2.600v2.600h-2.600z" fill="none" stroke="#2f7ad6" stroke-width=".9"/></svg><span class="ttl"><b class="fx" style="transform:scaleX(0.932)">GBPNZD,H4</b></span>
<span class="wb" style="right:76px"><i class="bmin"></i></span><span class="wb" style="right:42px"><i class="bres"></i></span><span class="wb" style="right:8px"><svg width="12" height="10" viewBox="0 0 12 10"><path d="M1.5 1l9 8M10.5 1l-9 8" stroke="#8490a0" stroke-width="4.2"/><path d="M1.5 1l9 8M10.5 1l-9 8" stroke="#fff" stroke-width="2.3"/></svg></span></div>
<div class="edge" style="left:7px;top:29.6px;width:436.6px;height:112.0px"><div class="chart">
<svg class="cs" width="434.6" height="110.0" viewBox="690.713 192.806 325.791 82.460">
<path d="M717.91 195.31V259.87M741.90 195.31V259.87M765.89 195.31V259.87M789.88 195.31V259.87M813.87 195.31V259.87M837.85 195.31V259.87M861.84 195.31V259.87M885.83 195.31V259.87M909.82 195.31V259.87M933.81 195.31V259.87M957.80 195.31V259.87M692.61 207.97H982.30M692.61 232.82H982.30M692.61 257.67H982.30" class="grid"/>
<path d="M692.61 208.00H982.30" class="bid"/>
<path d="M694.51 229.9V232.9M696.01 229.5V233.0M697.51 229.8V232.4M699.01 229.5V233.0M700.51 230.2V233.1M702.01 231.7V233.4M703.51 231.6V233.2M705.01 230.6V233.6M706.51 229.9V232.6M708.01 230.7V233.0M709.51 231.2V232.7M711.01 229.4V233.0M712.51 230.3V233.0M714.01 229.5V232.3M715.51 229.9V232.1M717.01 229.4V232.1M718.51 231.5V234.2M720.01 232.9V235.9M721.51 234.8V236.5M723.01 235.2V237.0M724.51 235.9V237.8M726.01 235.2V237.4M727.51 234.2V237.1M729.01 234.1V236.7M730.51 233.2V235.9M732.01 233.1V234.8M733.51 231.6V233.7M735.01 230.4V232.4M736.51 229.0V232.5M738.01 227.2V230.8M739.51 228.2V230.9M741.01 228.2V230.2M742.51 229.1V230.7M744.01 228.7V231.4M745.51 229.9V231.8M747.01 230.4V232.4M748.51 230.1V231.8M750.01 230.0V232.4M751.51 228.9V232.6M753.01 229.0V232.5M754.51 229.3V232.4M756.01 230.2V233.0M757.51 229.7V232.2M759.01 230.0V233.4M760.51 230.6V232.8M762.01 230.8V234.6M763.51 231.0V234.1M765.01 231.4V233.4M766.51 231.1V233.2M768.01 227.0V233.0M769.51 229.4V232.4M771.01 229.6V233.1M772.51 230.0V231.6M774.01 229.7V232.7M775.51 228.9V232.6M777.01 228.6V232.1M778.51 228.2V231.8M780.01 227.7V231.0M781.51 226.1V229.6M783.01 226.2V227.8M784.51 225.6V227.4M786.01 224.8V227.4M787.51 223.7V227.4M789.01 223.4V225.9M790.51 221.7V224.9M792.01 222.5V225.7M793.51 224.2V226.6M795.01 224.1V226.7M796.51 224.8V227.3M798.01 223.5V227.2M799.51 223.8V227.4M801.01 223.4V227.0M802.51 224.8V226.4M804.01 223.9V226.5M805.51 224.3V227.1M807.01 224.6V227.7M808.51 226.3V228.4M810.01 227.2V229.9M811.51 227.7V229.8M813.01 227.4V230.7M814.51 227.2V230.5M816.01 225.9V229.1M817.51 225.8V229.2M819.01 225.1V228.0M820.51 223.7V227.5M822.01 224.1V226.0M823.51 222.0V225.7M825.01 220.6V224.3M826.51 220.1V222.5M828.01 219.2V222.8M829.51 220.0V223.4M831.01 220.5V223.2M832.51 220.4V224.0M834.01 221.2V223.1M835.51 221.8V224.5M837.01 222.5V224.8M838.51 222.2V224.6M840.01 220.4V224.8M841.51 220.2V224.6M843.01 220.4V224.1M844.51 219.0V223.2M846.01 220.0V224.9M847.51 220.5V225.3M849.01 220.6V225.9M850.51 220.7V224.0M852.01 219.8V225.3M853.51 223.1V227.1M855.01 226.5V232.4M856.51 231.8V237.9M858.01 237.3V244.9M859.51 241.6V257.9M861.01 237.7V245.8M862.51 231.3V238.3M864.01 231.5V235.6M865.51 231.5V234.7M867.01 230.0V235.8M868.51 229.7V235.4M870.01 229.2V234.0M871.51 230.2V235.4M873.01 230.1V233.2M874.51 227.6V232.7M876.01 228.8V232.1M877.51 226.8V231.8M879.01 226.1V231.0M880.51 223.5V238.1M882.01 228.1V231.6M883.51 229.5V232.9M885.01 230.6V233.1M886.51 229.2V235.2M888.01 229.2V234.2M889.51 224.8V230.0M891.01 220.2V225.4M892.51 216.9V221.0M894.01 214.8V220.8M895.51 214.5V218.1M897.01 213.2V218.0M898.51 212.1V217.5M900.01 208.7V213.8M901.51 201.2V212.3M903.01 203.8V206.6M904.51 203.5V208.8M906.01 204.6V209.8M907.51 204.6V210.7M909.01 204.2V210.2M910.51 204.5V210.3M912.01 204.4V208.7M913.51 203.3V208.2M915.01 202.6V206.8M916.51 201.2V205.0M918.01 198.6V203.3M919.51 197.5V200.9M921.01 197.9V202.3M922.51 200.2V203.4M924.01 202.8V206.1M925.51 202.1V207.9M927.01 204.6V208.8M928.51 205.1V208.5M930.01 207.1V211.2M931.51 208.7V211.4M933.01 208.4V214.0M934.51 208.2V211.5M936.01 207.3V211.4M937.51 206.8V211.1M939.01 207.4V210.6M940.51 207.2V211.8M942.01 205.3V209.1M943.51 205.0V207.9M945.01 205.3V209.6M946.51 205.0V209.0M948.01 205.2V209.6M949.51 206.0V210.4M951.01 206.3V208.8M952.51 205.2V207.9M954.01 203.8V207.8M955.51 202.2V206.9M957.01 202.9V207.5M958.51 202.9V205.4M960.01 201.9V206.9M961.51 203.7V207.1M963.01 205.5V208.0M964.51 205.7V211.0M966.01 207.9V211.6M967.51 207.8V213.2M969.01 208.4V211.8M970.51 206.8V211.0M972.01 206.3V209.6M973.51 205.7V208.3M975.01 205.4V208.8M976.51 205.6V208.2M978.01 206.0V210.3" class="bars"/>
<path d="M692.61 195.31H982.30V259.87H692.61Z" class="frame"/>
<path d="M982.30 207.97h2.2M982.30 232.82h2.2M982.30 257.67h2.2M692.61 259.87v2.6M741.90 259.87v2.6M789.88 259.87v2.6M837.85 259.87v2.6M885.83 259.87v2.6M933.81 259.87v2.6" class="frame"/>
<path d="M696.01 199.91h5.2l-2.6 2.8z" fill="#fff"/>
<text x="704.21" y="203.51" class="ct" textLength="153.16" lengthAdjust="spacingAndGlyphs" xml:space="preserve">GBPNZD,H4  1.97517 1.97751 1.97323 1.97490</text>
<text x="692.01" y="269.37" class="ct" textLength="39.88" lengthAdjust="spacingAndGlyphs" xml:space="preserve">30 Aug 2022</text>
<text x="741.10" y="269.37" class="ct" textLength="38.30" lengthAdjust="spacingAndGlyphs" xml:space="preserve">7 Sep 00:00</text>
<text x="789.08" y="269.37" class="ct" textLength="42.24" lengthAdjust="spacingAndGlyphs" xml:space="preserve">14 Sep 08:00</text>
<text x="837.05" y="269.37" class="ct" textLength="42.24" lengthAdjust="spacingAndGlyphs" xml:space="preserve">21 Sep 16:00</text>
<text x="885.03" y="269.37" class="ct" textLength="42.24" lengthAdjust="spacingAndGlyphs" xml:space="preserve">29 Sep 00:00</text>
<text x="933.01" y="269.37" class="ct" textLength="36.71" lengthAdjust="spacingAndGlyphs" xml:space="preserve">6 Oct 08:00</text>
<text x="986.50" y="210.67" class="ct" textLength="25.67" lengthAdjust="spacingAndGlyphs" xml:space="preserve">1.97675</text>
<text x="986.50" y="235.52" class="ct" textLength="25.67" lengthAdjust="spacingAndGlyphs" xml:space="preserve">1.89685</text>
<text x="986.50" y="260.37" class="ct" textLength="25.67" lengthAdjust="spacingAndGlyphs" xml:space="preserve">1.81695</text>
<rect x="983.60" y="204.20" width="29.60" height="7.6" fill="#fff"/>
<text x="986.50" y="210.70" class="ct" textLength="25.67" lengthAdjust="spacingAndGlyphs" xml:space="preserve" style="fill:#000">1.97490</text>
</svg>
</div></div></div></div><div class="mw" style="left:911.4px;top:377.2px;width:454.6px;height:152.7px">
<div class="mwin"><div class="cap"><svg class="wi" width="15" height="15" viewBox="0 0 15 15"><rect x=".6" y=".6" width="9.800" height="8.800" rx="1.200" fill="#fff" stroke="#4f97e0" stroke-width="1.200"/><path d="M2.500 3h2.500v2h-2.500zM6 3h3v1h-3z" fill="#5ea2e6"/><rect x="3.600" y="5.100" width="10.800" height="9.300" rx="1.200" fill="#fff" stroke="#3f8be0" stroke-width="1.200"/><path d="M5.500 8h3v1.200h-3zM9.500 8h3v1.200h-3z" fill="#8bbcf0"/><path d="M6 10.200h2.600v2.600h-2.600zM9.800 10.200h2.600v2.600h-2.600z" fill="none" stroke="#2f7ad6" stroke-width=".9"/></svg><span class="ttl"><b class="fx" style="transform:scaleX(0.914)">GBPCAD,H4</b></span>
<span class="wb" style="right:76px"><i class="bmin"></i></span><span class="wb" style="right:42px"><i class="bres"></i></span><span class="wb" style="right:8px"><svg width="12" height="10" viewBox="0 0 12 10"><path d="M1.5 1l9 8M10.5 1l-9 8" stroke="#8490a0" stroke-width="4.2"/><path d="M1.5 1l9 8M10.5 1l-9 8" stroke="#fff" stroke-width="2.3"/></svg></span></div>
<div class="edge" style="left:7px;top:29.6px;width:436.6px;height:112.1px"><div class="chart">
<svg class="cs" width="434.6" height="110.1" viewBox="690.713 307.200 325.791 82.535">
<path d="M717.91 309.70V374.33M741.90 309.70V374.33M765.89 309.70V374.33M789.88 309.70V374.33M813.87 309.70V374.33M837.85 309.70V374.33M861.84 309.70V374.33M885.83 309.70V374.33M909.82 309.70V374.33M933.81 309.70V374.33M957.80 309.70V374.33M692.61 322.43H982.30M692.61 347.28H982.30M692.61 372.13H982.30" class="grid"/>
<path d="M692.61 322.40H982.30" class="bid"/>
<path d="M694.51 324.0V327.5M696.01 323.6V327.3M697.51 324.0V326.5M699.01 324.4V326.5M700.51 324.7V327.4M702.01 324.9V327.4M703.51 325.0V327.1M705.01 324.7V327.0M706.51 324.3V327.1M708.01 324.0V326.6M709.51 322.6V327.2M711.01 325.0V327.4M712.51 326.4V327.9M714.01 325.3V328.7M715.51 326.4V328.6M717.01 325.5V328.4M718.51 326.9V329.9M720.01 328.2V330.3M721.51 329.5V331.6M723.01 329.3V332.8M724.51 330.5V332.4M726.01 330.1V332.0M727.51 328.7V332.2M729.01 329.0V331.9M730.51 327.8V330.1M732.01 327.4V330.0M733.51 326.9V329.3M735.01 325.8V327.7M736.51 325.5V327.4M738.01 326.4V328.5M739.51 327.9V330.4M741.01 328.0V331.4M742.51 328.9V331.5M744.01 328.6V331.9M745.51 329.0V332.6M747.01 328.9V334.9M748.51 329.8V333.1M750.01 329.6V331.8M751.51 329.0V332.4M753.01 329.0V332.7M754.51 330.0V332.1M756.01 330.0V332.3M757.51 330.8V334.1M759.01 330.6V334.2M760.51 330.7V332.8M762.01 329.5V333.3M763.51 331.3V332.9M765.01 331.2V333.4M766.51 329.5V332.9M768.01 329.7V331.7M769.51 329.1V331.0M771.01 327.7V330.8M772.51 327.4V329.8M774.01 327.3V329.1M775.51 327.0V329.2M777.01 326.4V329.1M778.51 326.9V328.8M780.01 326.7V330.0M781.51 328.4V331.0M783.01 328.7V331.5M784.51 328.9V331.7M786.01 328.0V331.0M787.51 327.5V331.3M789.01 327.2V329.7M790.51 326.3V328.2M792.01 324.4V327.9M793.51 325.0V328.0M795.01 325.5V329.2M796.51 325.9V329.2M798.01 327.8V329.8M799.51 326.7V330.0M801.01 327.3V329.5M802.51 327.1V330.5M804.01 327.0V328.9M805.51 327.2V329.0M807.01 328.1V331.1M808.51 329.0V332.4M810.01 329.1V331.6M811.51 327.4V331.1M813.01 326.7V330.5M814.51 327.1V330.6M816.01 328.3V330.1M817.51 328.5V330.7M819.01 327.8V330.7M820.51 328.6V331.0M822.01 327.3V330.6M823.51 327.2V330.6M825.01 326.9V329.3M826.51 326.6V329.3M828.01 325.7V327.4M829.51 324.9V327.5M831.01 326.1V328.1M832.51 326.0V327.8M834.01 326.7V328.8M835.51 327.3V329.9M837.01 327.2V329.8M838.51 327.3V332.7M840.01 326.3V331.6M841.51 325.1V330.0M843.01 323.9V329.5M844.51 322.9V328.1M846.01 323.0V329.0M847.51 325.2V330.2M849.01 324.6V330.7M850.51 328.0V330.9M852.01 327.9V332.0M853.51 327.9V334.8M855.01 334.2V341.2M856.51 340.6V347.2M858.01 346.6V355.2M859.51 352.1V371.9M861.01 351.0V358.6M862.51 342.9V351.6M864.01 343.6V346.6M865.51 344.8V348.0M867.01 343.1V348.6M868.51 343.2V346.5M870.01 342.8V348.4M871.51 343.4V346.2M873.01 342.4V346.8M874.51 344.9V347.3M876.01 344.6V349.7M877.51 345.0V351.1M879.01 346.5V350.0M880.51 339.2V354.7M882.01 343.9V346.6M883.51 342.2V346.4M885.01 342.6V345.3M886.51 342.7V346.8M888.01 341.3V347.3M889.51 336.8V343.2M891.01 330.3V337.4M892.51 327.0V331.1M894.01 323.5V328.8M895.51 323.6V326.9M897.01 323.3V326.5M898.51 324.1V327.4M900.01 320.2V325.4M901.51 319.3V323.1M903.01 317.5V320.8M904.51 318.5V324.6M906.01 317.2V322.1M907.51 315.8V320.6M909.01 317.4V320.6M910.51 315.9V320.6M912.01 315.4V319.0M913.51 316.0V318.7M915.01 314.0V318.9M916.51 313.4V316.7M918.01 313.4V317.0M919.51 311.7V317.2M921.01 314.5V317.4M922.51 312.9V318.2M924.01 314.7V319.6M925.51 315.5V318.4M927.01 315.6V320.4M928.51 315.9V319.4M930.01 315.9V321.7M931.51 316.4V320.8M933.01 316.1V320.2M934.51 316.7V321.6M936.01 319.8V324.2M937.51 319.7V324.1M939.01 319.9V324.6M940.51 319.2V325.2M942.01 319.4V322.1M943.51 319.9V325.4M945.01 321.9V327.6M946.51 324.8V327.8M948.01 325.1V328.3M949.51 325.7V328.5M951.01 324.8V330.8M952.51 324.5V329.9M954.01 326.1V329.9M955.51 324.3V329.1M957.01 322.2V327.2M958.51 322.8V325.9M960.01 321.4V326.9M961.51 322.3V325.8M963.01 320.6V326.2M964.51 324.2V328.1M966.01 326.0V331.9M967.51 327.7V331.2M969.01 326.8V329.7M970.51 323.6V329.2M972.01 322.7V326.6M973.51 321.1V324.8M975.01 321.0V324.2M976.51 319.6V325.4M978.01 321.5V324.6" class="bars"/>
<path d="M692.61 309.70H982.30V374.33H692.61Z" class="frame"/>
<path d="M982.30 322.43h2.2M982.30 347.28h2.2M982.30 372.13h2.2M692.61 374.33v2.6M741.90 374.33v2.6M789.88 374.33v2.6M837.85 374.33v2.6M885.83 374.33v2.6M933.81 374.33v2.6" class="frame"/>
<path d="M696.01 314.30h5.2l-2.6 2.8z" fill="#fff"/>
<text x="704.21" y="317.90" class="ct" textLength="153.56" lengthAdjust="spacingAndGlyphs" xml:space="preserve">GBPCAD,H4  1.53259 1.53314 1.52880 1.53104</text>
<text x="692.01" y="383.83" class="ct" textLength="39.88" lengthAdjust="spacingAndGlyphs" xml:space="preserve">30 Aug 2022</text>
<text x="741.10" y="383.83" class="ct" textLength="38.30" lengthAdjust="spacingAndGlyphs" xml:space="preserve">7 Sep 00:00</text>
<text x="789.08" y="383.83" class="ct" textLength="42.24" lengthAdjust="spacingAndGlyphs" xml:space="preserve">14 Sep 08:00</text>
<text x="837.05" y="383.83" class="ct" textLength="42.24" lengthAdjust="spacingAndGlyphs" xml:space="preserve">21 Sep 16:00</text>
<text x="885.03" y="383.83" class="ct" textLength="42.24" lengthAdjust="spacingAndGlyphs" xml:space="preserve">29 Sep 00:00</text>
<text x="933.01" y="383.83" class="ct" textLength="36.71" lengthAdjust="spacingAndGlyphs" xml:space="preserve">6 Oct 08:00</text>
<text x="986.50" y="325.13" class="ct" textLength="25.67" lengthAdjust="spacingAndGlyphs" xml:space="preserve">1.53250</text>
<text x="986.50" y="349.98" class="ct" textLength="25.67" lengthAdjust="spacingAndGlyphs" xml:space="preserve">1.47130</text>
<text x="986.50" y="374.83" class="ct" textLength="25.67" lengthAdjust="spacingAndGlyphs" xml:space="preserve">1.41010</text>
<rect x="983.60" y="318.60" width="29.60" height="7.6" fill="#fff"/>
<text x="986.50" y="325.10" class="ct" textLength="25.67" lengthAdjust="spacingAndGlyphs" xml:space="preserve" style="fill:#000">1.53104</text>
</svg>
</div></div></div></div><div class="mw" style="left:911.4px;top:529.9px;width:454.6px;height:152.60000000000002px">
<div class="mwin"><div class="cap"><svg class="wi" width="15" height="15" viewBox="0 0 15 15"><rect x=".6" y=".6" width="9.800" height="8.800" rx="1.200" fill="#fff" stroke="#4f97e0" stroke-width="1.200"/><path d="M2.500 3h2.500v2h-2.500zM6 3h3v1h-3z" fill="#5ea2e6"/><rect x="3.600" y="5.100" width="10.800" height="9.300" rx="1.200" fill="#fff" stroke="#3f8be0" stroke-width="1.200"/><path d="M5.500 8h3v1.200h-3zM9.500 8h3v1.200h-3z" fill="#8bbcf0"/><path d="M6 10.200h2.600v2.600h-2.600zM9.800 10.200h2.600v2.600h-2.600z" fill="none" stroke="#2f7ad6" stroke-width=".9"/></svg><span class="ttl"><b class="fx" style="transform:scaleX(0.956)">AUDCHF,H4</b></span>
<span class="wb" style="right:76px"><i class="bmin"></i></span><span class="wb" style="right:42px"><i class="bres"></i></span><span class="wb" style="right:8px"><svg width="12" height="10" viewBox="0 0 12 10"><path d="M1.5 1l9 8M10.5 1l-9 8" stroke="#8490a0" stroke-width="4.2"/><path d="M1.5 1l9 8M10.5 1l-9 8" stroke="#fff" stroke-width="2.3"/></svg></span></div>
<div class="edge" style="left:7px;top:29.6px;width:436.6px;height:112.00000000000003px"><div class="chart">
<svg class="cs" width="434.6" height="110.00000000000003" viewBox="690.713 421.669 325.791 82.460">
<path d="M717.91 424.17V488.73M741.90 424.17V488.73M765.89 424.17V488.73M789.88 424.17V488.73M813.87 424.17V488.73M837.85 424.17V488.73M861.84 424.17V488.73M885.83 424.17V488.73M909.82 424.17V488.73M933.81 424.17V488.73M957.80 424.17V488.73M692.61 436.83H982.30M692.61 461.68H982.30M692.61 486.53H982.30" class="grid"/>
<path d="M692.61 479.60H982.30" class="bid"/>
<path d="M694.51 428.4V434.5M696.01 429.3V432.7M697.51 427.1V432.6M699.01 426.7V432.5M700.51 427.8V431.2M702.01 428.4V433.5M703.51 429.7V435.5M705.01 429.9V435.3M706.51 430.8V436.4M708.01 430.6V435.3M709.51 431.8V435.2M711.01 431.8V435.6M712.51 433.2V437.3M714.01 433.5V436.4M715.51 433.5V436.2M717.01 432.6V436.4M718.51 431.8V435.5M720.01 432.5V436.2M721.51 433.1V435.8M723.01 431.9V435.8M724.51 432.9V436.3M726.01 432.2V437.6M727.51 432.8V437.2M729.01 432.0V436.8M730.51 432.8V438.8M732.01 433.4V438.5M733.51 432.7V437.2M735.01 434.6V439.0M736.51 433.0V438.9M738.01 436.4V439.1M739.51 435.2V440.1M741.01 437.7V440.7M742.51 439.0V442.3M744.01 437.0V442.2M745.51 438.6V442.9M747.01 439.8V442.4M748.51 439.8V442.9M750.01 438.8V444.8M751.51 441.6V444.4M753.01 442.9V447.8M754.51 443.2V446.8M756.01 445.8V448.5M757.51 444.2V449.5M759.01 443.2V449.2M760.51 444.0V446.9M762.01 441.8V447.6M763.51 444.1V446.9M765.01 443.0V446.6M766.51 443.3V447.6M768.01 444.5V447.6M769.51 444.2V449.2M771.01 442.7V447.4M772.51 443.0V448.3M774.01 443.7V447.1M775.51 444.4V448.1M777.01 444.7V448.7M778.51 445.3V449.3M780.01 446.1V448.6M781.51 444.8V452.5M783.01 450.2V454.4M784.51 451.8V456.6M786.01 453.5V456.2M787.51 454.7V457.4M789.01 454.9V457.8M790.51 454.9V458.4M792.01 453.0V459.0M793.51 454.1V457.4M795.01 452.2V456.4M796.51 450.4V456.1M798.01 452.5V456.8M799.51 455.1V460.9M801.01 458.4V461.3M802.51 457.0V462.8M804.01 458.7V461.5M805.51 457.6V462.5M807.01 457.2V462.3M808.51 458.2V461.3M810.01 455.4V460.4M811.51 455.4V460.1M813.01 454.8V458.0M814.51 453.4V458.4M816.01 456.0V459.0M817.51 454.6V459.7M819.01 454.8V458.4M820.51 453.3V456.7M822.01 453.3V458.4M823.51 453.9V456.3M825.01 452.5V457.4M826.51 453.8V458.8M828.01 456.3V460.2M829.51 456.9V459.7M831.01 458.3V460.9M832.51 457.9V462.3M834.01 457.6V463.3M835.51 458.6V464.1M837.01 459.4V462.7M838.51 459.2V464.5M840.01 462.6V465.5M841.51 464.3V468.1M843.01 459.0V471.4M844.51 449.1V462.0M846.01 450.8V455.6M847.51 451.0V455.8M849.01 453.1V458.0M850.51 451.8V457.0M852.01 455.1V458.8M853.51 457.2V460.4M855.01 459.6V463.0M856.51 461.6V465.3M858.01 463.0V467.2M859.51 461.3V465.2M861.01 459.7V465.7M862.51 460.1V463.8M864.01 458.8V464.2M865.51 459.9V462.6M867.01 460.3V464.7M868.51 459.6V465.7M870.01 460.2V463.0M871.51 461.7V465.0M873.01 464.4V468.2M874.51 464.6V469.7M876.01 466.2V469.2M877.51 466.2V471.0M879.01 467.7V470.5M880.51 466.9V472.4M882.01 467.4V471.7M883.51 467.2V470.0M885.01 468.4V471.3M886.51 466.3V472.3M888.01 467.7V473.2M889.51 468.2V472.0M891.01 467.3V472.9M892.51 468.9V471.8M894.01 468.9V474.4M895.51 467.8V473.9M897.01 469.1V474.8M898.51 467.8V472.8M900.01 468.9V473.9M901.51 472.1V474.7M903.01 471.9V476.6M904.51 470.3V474.6M906.01 468.4V472.4M907.51 464.0V469.0M909.01 459.5V464.6M910.51 457.8V460.6M912.01 456.2V459.4M913.51 457.6V462.3M915.01 455.1V465.4M916.51 461.6V465.8M918.01 465.2V469.4M919.51 467.8V471.5M921.01 465.9V470.9M922.51 464.8V470.9M924.01 466.9V469.8M925.51 467.7V472.1M927.01 466.8V472.8M928.51 463.7V469.6M930.01 462.4V468.4M931.51 462.8V467.1M933.01 464.5V468.1M934.51 466.2V469.2M936.01 468.6V471.7M937.51 466.7V471.7M939.01 467.7V471.5M940.51 469.2V472.5M942.01 467.3V473.1M943.51 468.9V472.5M945.01 468.3V473.9M946.51 468.8V474.6M948.01 470.9V477.0M949.51 472.6V476.5M951.01 473.7V476.9M952.51 473.4V479.4M954.01 474.8V477.6M955.51 475.2V478.9M957.01 473.5V479.2M958.51 474.3V480.3M960.01 476.9V481.8M961.51 476.6V482.4M963.01 477.2V482.2M964.51 477.4V482.0M966.01 479.6V482.1M967.51 478.9V484.7M969.01 481.3V485.4M970.51 481.6V485.9M972.01 480.7V484.8M973.51 479.8V483.0M975.01 479.5V483.0M976.51 478.0V483.7M978.01 477.6V483.4" class="bars"/>
<path d="M692.61 424.17H982.30V488.73H692.61Z" class="frame"/>
<path d="M982.30 436.83h2.2M982.30 461.68h2.2M982.30 486.53h2.2M692.61 488.73v2.6M741.90 488.73v2.6M789.88 488.73v2.6M837.85 488.73v2.6M885.83 488.73v2.6M933.81 488.73v2.6" class="frame"/>
<path d="M696.01 428.77h5.2l-2.6 2.8z" fill="#fff"/>
<text x="704.21" y="432.37" class="ct" textLength="152.37" lengthAdjust="spacingAndGlyphs" xml:space="preserve">AUDCHF,H4  0.62610 0.62776 0.62574 0.62720</text>
<text x="692.01" y="498.23" class="ct" textLength="39.88" lengthAdjust="spacingAndGlyphs" xml:space="preserve">30 Aug 2022</text>
<text x="741.10" y="498.23" class="ct" textLength="38.30" lengthAdjust="spacingAndGlyphs" xml:space="preserve">7 Sep 00:00</text>
<text x="789.08" y="498.23" class="ct" textLength="42.24" lengthAdjust="spacingAndGlyphs" xml:space="preserve">14 Sep 08:00</text>
<text x="837.05" y="498.23" class="ct" textLength="42.24" lengthAdjust="spacingAndGlyphs" xml:space="preserve">21 Sep 16:00</text>
<text x="885.03" y="498.23" class="ct" textLength="42.24" lengthAdjust="spacingAndGlyphs" xml:space="preserve">29 Sep 00:00</text>
<text x="933.01" y="498.23" class="ct" textLength="36.71" lengthAdjust="spacingAndGlyphs" xml:space="preserve">6 Oct 08:00</text>
<text x="986.50" y="439.53" class="ct" textLength="25.67" lengthAdjust="spacingAndGlyphs" xml:space="preserve">0.66520</text>
<text x="986.50" y="464.38" class="ct" textLength="25.67" lengthAdjust="spacingAndGlyphs" xml:space="preserve">0.64360</text>
<text x="986.50" y="489.23" class="ct" textLength="25.67" lengthAdjust="spacingAndGlyphs" xml:space="preserve">0.62200</text>
<rect x="983.60" y="475.80" width="29.60" height="7.6" fill="#fff"/>
<text x="986.50" y="482.30" class="ct" textLength="25.67" lengthAdjust="spacingAndGlyphs" xml:space="preserve" style="fill:#000">0.62720</text>
</svg>
</div></div></div></div>
<div class="tabsbar">
<i class="tline"></i><i class="tgr"></i><i class="atab"></i>
<span class="tab on" style="left:17.3px"><b class="fx" style="transform:scaleX(0.917)">EURCHF,H4</b></span>
<span class="tab" style="left:100.7px"><b class="fx" style="transform:scaleX(0.910)">EURGBP,H4</b></span>
<span class="tab" style="left:184.4px"><b class="fx" style="transform:scaleX(0.909)">EURAUD,H4</b></span>
<span class="tab" style="left:269.5px"><b class="fx" style="transform:scaleX(0.879)">EURJPY,H4</b></span>
<span class="tab" style="left:349.8px"><b class="fx" style="transform:scaleX(0.890)">GBPJPY,H4</b></span>
<span class="tab" style="left:430.9px"><b class="fx" style="transform:scaleX(0.926)">AUDJPY,H4</b></span>
<span class="tab" style="left:514.9px"><b class="fx" style="transform:scaleX(0.916)">GBPAUD,H4</b></span>
<span class="tab" style="left:602.6px"><b class="fx" style="transform:scaleX(0.932)">GBPNZD,H4</b></span>
<span class="tab" style="left:691.3px"><b class="fx" style="transform:scaleX(0.914)">GBPCAD,H4</b></span>
<span class="tab" style="left:778.7px"><b class="fx" style="transform:scaleX(0.956)">AUDCHF,H4</b></span>
<i class="tbs" style="left:173.1px"></i>
<i class="tbs" style="left:257.5px"></i>
<i class="tbs" style="left:338.2px"></i>
<i class="tbs" style="left:417.9px"></i>
<i class="tbs" style="left:501.9px"></i>
<i class="tbs" style="left:589.7px"></i>
<i class="tbs" style="left:678.7px"></i>
<i class="tbs" style="left:766.1px"></i>
<i class="tbs" style="left:854.4px"></i>
<i class="tarr l" style="left:1334px"></i><i class="tarr r" style="left:1354px"></i>
</div>
<div class="statusbar">
<i class="ssep" style="left:672.8px"></i>
<i class="ssep" style="left:788.5px"></i>
<i class="ssep" style="left:891.5px"></i>
<i class="ssep" style="left:962.0px"></i>
<i class="ssep" style="left:1033.3px"></i>
<i class="ssep" style="left:1101.4px"></i>
<i class="ssep" style="left:1171.5px"></i>
<i class="ssep" style="left:1237.5px"></i>
<span class="st" style="left:679px"><b class="fx" style="transform:scaleX(0.982)">Default</b></span>
<svg class="sig" style="left:1243px;top:5px" width="25" height="14" viewBox="0 0 25 14"><rect x="0.0" y="0" width="1.600" height="10.0" fill="#b59a5a"/><rect x="0.0" y="10.0" width="1.600" height="2.5" fill="#2a5c98"/><rect x="2.4" y="0" width="1.600" height="9.1" fill="#4a9c3c"/><rect x="2.4" y="9.1" width="1.600" height="3.5" fill="#2a5c98"/><rect x="4.8" y="0" width="1.600" height="8.1" fill="#4a9c3c"/><rect x="4.8" y="8.1" width="1.600" height="4.4" fill="#2a5c98"/><rect x="7.2" y="0" width="1.600" height="7.2" fill="#b59a5a"/><rect x="7.2" y="7.2" width="1.600" height="5.3" fill="#2a5c98"/><rect x="9.6" y="0" width="1.600" height="6.2" fill="#4a9c3c"/><rect x="9.6" y="6.2" width="1.600" height="6.3" fill="#2a5c98"/><rect x="12.0" y="0" width="1.600" height="5.2" fill="#4a9c3c"/><rect x="12.0" y="5.2" width="1.600" height="7.2" fill="#2a5c98"/><rect x="14.4" y="0" width="1.600" height="4.3" fill="#b59a5a"/><rect x="14.4" y="4.3" width="1.600" height="8.2" fill="#2a5c98"/><rect x="16.8" y="0" width="1.600" height="3.4" fill="#4a9c3c"/><rect x="16.8" y="3.4" width="1.600" height="9.1" fill="#2a5c98"/><rect x="19.2" y="0" width="1.600" height="2.4" fill="#4a9c3c"/><rect x="19.2" y="2.4" width="1.600" height="10.1" fill="#2a5c98"/><rect x="21.6" y="0" width="1.600" height="1.5" fill="#b59a5a"/><rect x="21.6" y="1.5" width="1.600" height="11.0" fill="#2a5c98"/></svg>
<span class="st" style="left:1272px"><b class="fx" style="transform:scaleX(0.932)">17927/4 kb</b></span>
</div>
<div class="pop"><div class="gut"></div>
<div class="pi"><svg class="pic" width="17" height="16" viewBox="0 0 17 16"><rect x=".5" y=".5" width="13" height="12" rx="1" fill="#fff" stroke="#4a86c8"/><rect x="1" y="1" width="12" height="2.500" fill="#5b94d0"/><path d="M2 6.500l2.500-1.500 2.500 1 3-2 2 .5" stroke="#d9822b" stroke-width="1.200" fill="none"/><path d="M2 10.500l2.500-1 2.500 .8" stroke="#3aa23a" stroke-width="1.200" fill="none"/><rect x="8.500" y="6.500" width="8" height="9" fill="#e8f1fb" stroke="#3f78b8"/><rect x="10.300" y="7" width="4.300" height="3" fill="#fff" stroke="#3f78b8" stroke-width=".6"/><rect x="10.500" y="12" width="4" height="3.500" fill="#3f78b8"/></svg><span><b class="fx" style="transform:scaleX(0.935)">Save Template...</b></span></div>
<div class="pi"><span><b class="fx" style="transform:scaleX(0.968)">Load Template...</b></span></div>
<div class="pi"><i class="sub"></i><span><b class="fx" style="transform:scaleX(0.969)">Remove Template</b></span></div>
<div class="psep"></div>
<div class="pi"><span><b class="fx" style="transform:scaleX(0.914)">ADX</b></span></div>
<div class="pi"><span><b class="fx" style="transform:scaleX(0.950)">Asian session box</b></span></div>
<div class="pi"><span><b class="fx" style="transform:scaleX(0.973)">BollingerBands</b></span></div>
<div class="pi"><span><b class="fx" style="transform:scaleX(0.896)">Layers</b></span></div>
<div class="pi"><span><b class="fx" style="transform:scaleX(0.990)">Macd divergence</b></span></div>
<div class="pi"><span><b class="fx" style="transform:scaleX(1.040)">Momentum</b></span></div>
<div class="pi"><span><b class="fx" style="transform:scaleX(1.006)">Pivot points</b></span></div>
<div class="pi"><span><b class="fx" style="transform:scaleX(0.964)">Popular</b></span></div>
<div class="pi hl"><span><b class="fx" style="transform:scaleX(1.001)">Trend folllowing</b></span></div>
<div class="pi"><span><b class="fx" style="transform:scaleX(0.980)">Volume</b></span></div>
<div class="pi"><span><b class="fx" style="transform:scaleX(0.971)">Williams</b></span></div>
</div>
</div>
</body></html>
